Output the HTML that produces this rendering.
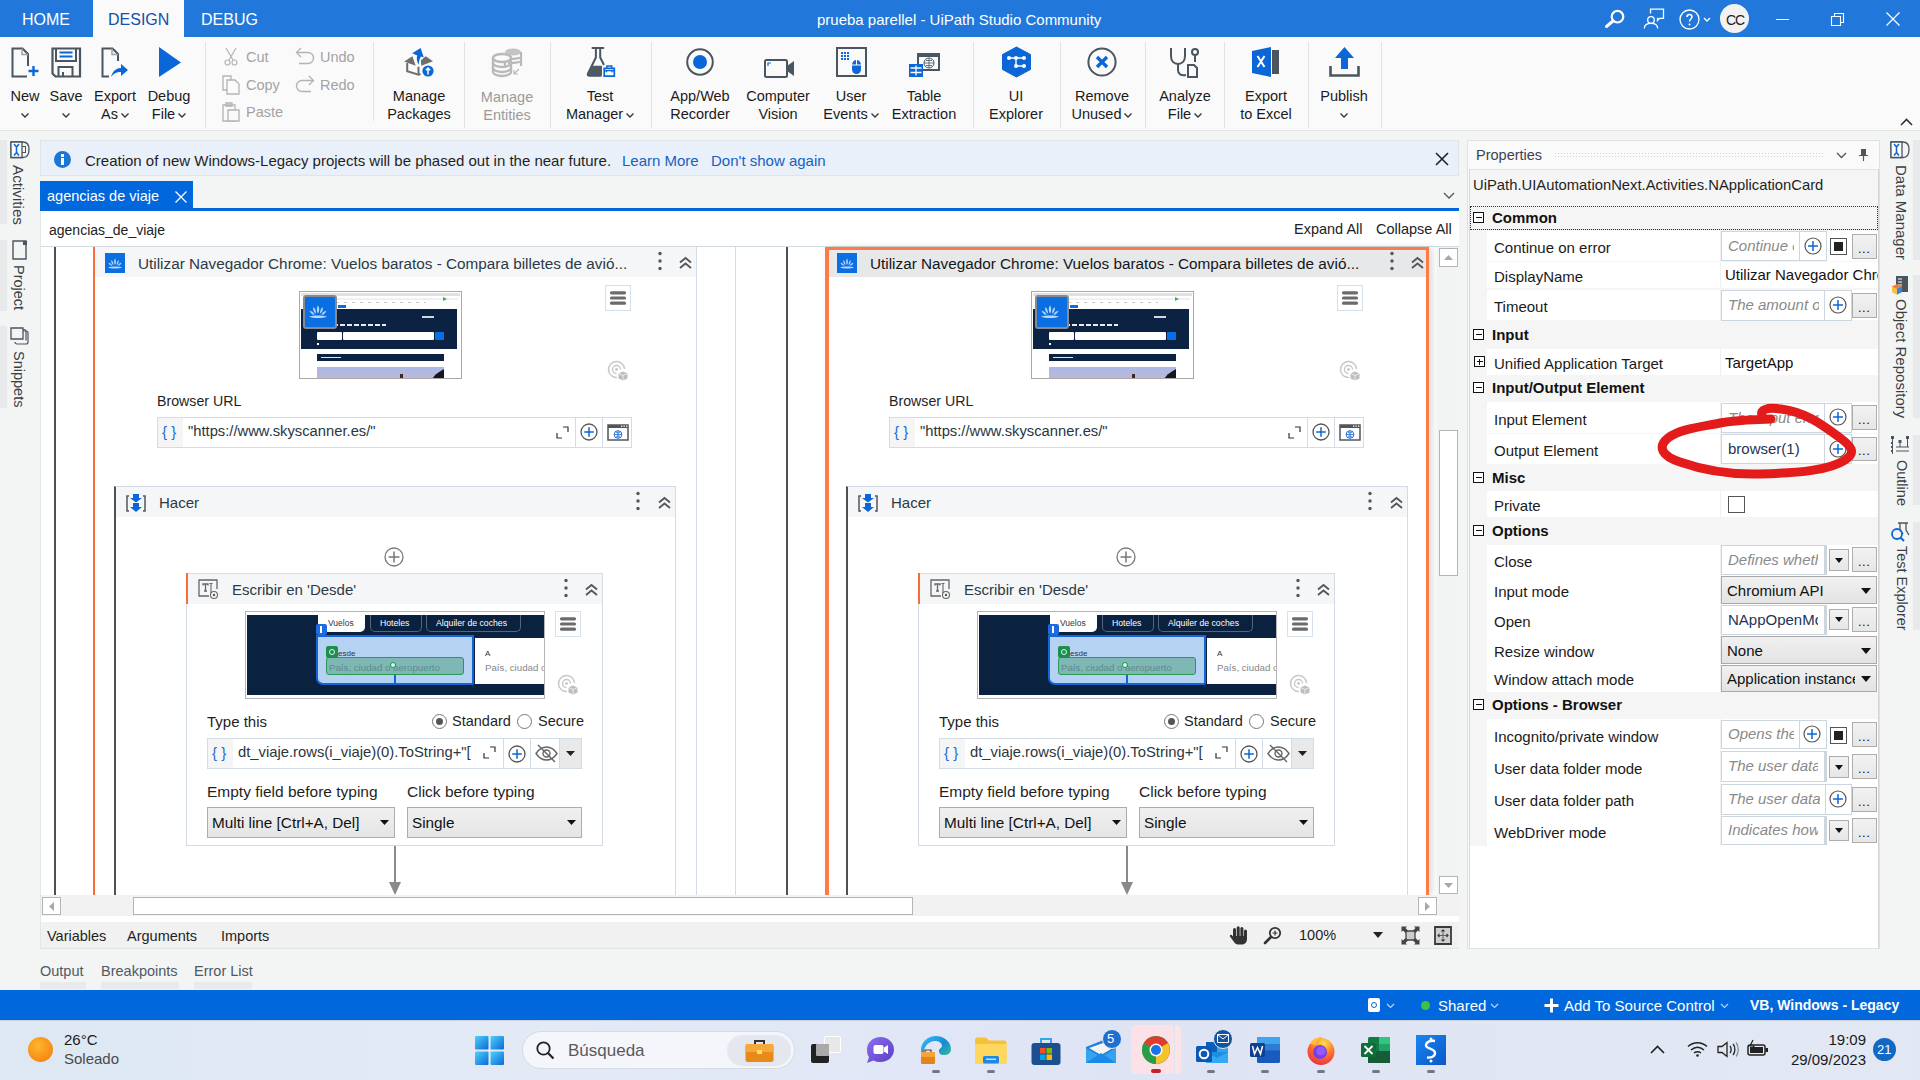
<!DOCTYPE html>
<html><head><meta charset="utf-8">
<style>
*{box-sizing:border-box;margin:0;padding:0}
html,body{width:1920px;height:1080px;overflow:hidden}
body{position:relative;background:#f3f5f5;font-family:"Liberation Sans",sans-serif;color:#1f1f1f;font-size:14px}
.a{position:absolute}
.t{position:absolute;white-space:nowrap;line-height:1}
svg{position:absolute;overflow:visible}
</style></head><body>

<!-- TITLE BAR -->
<div class="a" style="left:0;top:0;width:1920px;height:37px;background:#2178da"></div>
<div class="a" style="left:93px;top:0;width:91px;height:37px;background:#fafafa"></div>
<div class="t" style="left:22px;top:12px;font-size:16px;color:#fff">HOME</div>
<div class="t" style="left:108px;top:12px;font-size:16px;color:#1450a8">DESIGN</div>
<div class="t" style="left:201px;top:12px;font-size:16px;color:#fff">DEBUG</div>
<div class="t" style="left:817px;top:12px;font-size:15px;color:#fff">prueba parellel - UiPath Studio Community</div>

<!-- RIBBON -->
<div class="a" style="left:0;top:37px;width:1920px;height:94px;background:#fafafa;border-bottom:1px solid #e4e4e4"></div>
<style>
.rl{position:absolute;width:100px;text-align:center;font-size:14.5px;line-height:18px;color:#1b1b1b;white-space:nowrap}
.rl.g{color:#9a9a9a}
.sep{position:absolute;top:42px;width:1px;height:86px;background:#e2e2e2}
.ch{position:relative!important;display:inline-block;width:8px;height:5px;margin-left:3px;vertical-align:1px}
</style>
<!-- New -->
<svg style="left:11px;top:47px" width="28" height="31" viewBox="0 0 28 31"><path d="M16 29.5H1.5V1.5H11.5L17 7V19" fill="none" stroke="#4a555e" stroke-width="2"/><path d="M11 1.5V7.5H17" fill="none" stroke="#9aa3a9" stroke-width="1.5"/><path d="M22.5 19v10M17.5 24h10" stroke="#0b67d8" stroke-width="2.4"/></svg>
<div class="rl" style="top:87px;left:-25px;">New<br><svg class="ch" style="position:relative;margin:0" viewBox="0 0 8 5"><path d="M0.5 0.5L4 4L7.5 0.5" fill="none" stroke="#333" stroke-width="1.3"/></svg></div>
<!-- Save -->
<svg style="left:51px;top:47px" width="30" height="31" viewBox="0 0 30 31"><path d="M1.5 1.5H29V29.5H4.5L1.5 26.5Z" fill="none" stroke="#4a555e" stroke-width="2.2"/><path d="M5 2V14H25V2" fill="none" stroke="#4a555e" stroke-width="2"/><path d="M8.5 5.5H21.5M8.5 9.5H21.5" stroke="#0b67d8" stroke-width="2"/><path d="M7.5 29V20H21.5V29M12 29V25" fill="none" stroke="#4a555e" stroke-width="2"/></svg>
<div class="rl" style="top:87px;left:16px;">Save<br><svg class="ch" style="position:relative;margin:0" viewBox="0 0 8 5"><path d="M0.5 0.5L4 4L7.5 0.5" fill="none" stroke="#333" stroke-width="1.3"/></svg></div>
<!-- Export As -->
<svg style="left:101px;top:47px" width="28" height="31" viewBox="0 0 28 31"><path d="M8 29.5H1.5V1.5H11.5L17 7V14" fill="none" stroke="#4a555e" stroke-width="2"/><path d="M11 1.5V7.5H17" fill="none" stroke="#9aa3a9" stroke-width="1.5"/><path d="M10 30C12 23 16 21 20 21V17L27 23L20 29V25C16 25 13 26 10 30Z" fill="#0b67d8"/></svg>
<div class="rl" style="top:87px;left:65px;">Export<br>As<svg class="ch" viewBox="0 0 8 5"><path d="M0.5 0.5L4 4L7.5 0.5" fill="none" stroke="#333" stroke-width="1.3"/></svg></div>
<!-- Debug File -->
<svg style="left:159px;top:47px" width="23" height="31" viewBox="0 0 23 31"><path d="M0 0L22 15.5L0 30Z" fill="#0b67d8"/></svg>
<div class="rl" style="top:87px;left:119px;">Debug<br>File<svg class="ch" viewBox="0 0 8 5"><path d="M0.5 0.5L4 4L7.5 0.5" fill="none" stroke="#333" stroke-width="1.3"/></svg></div>
<div class="sep" style="left:205px"></div>
<!-- Cut Copy Paste -->
<svg style="left:223px;top:48px" width="16" height="18" viewBox="0 0 16 18"><path d="M3 0L10 12M13 0L6 12" stroke="#b4b4b4" stroke-width="1.2" fill="none"/><circle cx="4.5" cy="14.5" r="2.5" fill="none" stroke="#b4b4b4" stroke-width="1.2"/><circle cx="11.5" cy="14.5" r="2.5" fill="none" stroke="#b4b4b4" stroke-width="1.2"/></svg>
<div class="t" style="left:246px;top:50px;font-size:14.5px;color:#a3a3a3">Cut</div>
<svg style="left:222px;top:75px" width="18" height="20" viewBox="0 0 18 20"><path d="M1 1H9V15H1Z" fill="none" stroke="#b4b4b4" stroke-width="1.3"/><path d="M5 5H13L17 9V19H5Z" fill="#fafafa" stroke="#b4b4b4" stroke-width="1.3"/></svg>
<div class="t" style="left:246px;top:78px;font-size:14.5px;color:#a3a3a3">Copy</div>
<svg style="left:222px;top:102px" width="18" height="20" viewBox="0 0 18 20"><path d="M1 3H13V19H1Z" fill="none" stroke="#b4b4b4" stroke-width="1.3"/><path d="M4 1H10V4H4Z" fill="none" stroke="#b4b4b4" stroke-width="1.3"/><path d="M6 8H17V19H6Z" fill="#fafafa" stroke="#b4b4b4" stroke-width="1.3"/></svg>
<div class="t" style="left:246px;top:105px;font-size:14.5px;color:#a3a3a3">Paste</div>
<svg style="left:295px;top:47px" width="20" height="18" viewBox="0 0 20 18"><path d="M6 1L1.5 5.5L6 10" fill="none" stroke="#b4b4b4" stroke-width="1.4"/><path d="M2 5.5H13A5.5 5.5 0 0 1 13 16.5H4" fill="none" stroke="#b4b4b4" stroke-width="1.4"/></svg>
<div class="t" style="left:320px;top:50px;font-size:14.5px;color:#a3a3a3">Undo</div>
<svg style="left:295px;top:75px" width="20" height="18" viewBox="0 0 20 18"><path d="M14 1L18.5 5.5L14 10" fill="none" stroke="#b4b4b4" stroke-width="1.4"/><path d="M18 5.5H7A5.5 5.5 0 0 0 7 16.5H16" fill="none" stroke="#b4b4b4" stroke-width="1.4"/></svg>
<div class="t" style="left:320px;top:78px;font-size:14.5px;color:#a3a3a3">Redo</div>
<div class="sep" style="left:373px;height:79px"></div>
<!-- Manage Packages -->
<svg style="left:404px;top:48px" width="30" height="30" viewBox="0 0 30 30"><path d="M0.2 13.4L8.4 8.3L11.7 17.7Z" fill="#6e6e6e"/><path d="M16.9 12.5L21.7 8.3L29 13.3L17.3 17.7Z" fill="#6e6e6e"/><path d="M3.2 15V23.3L14.6 26.8L16.5 26" fill="none" stroke="#6e6e6e" stroke-width="2"/><path d="M14.5 18.8V26.5" stroke="#6e6e6e" stroke-width="2"/><path d="M16.6 0L19.8 9.6L17 8.6C15.6 10.5 15.2 13 14.6 16.8C13 14 12.3 11 13.2 7.6L8.2 5.3Z" fill="#0b67d8"/><circle cx="24" cy="23" r="5.6" fill="#0b67d8"/><path d="M24 26.5V20M21.8 22.2L24 20L26.2 22.2" fill="none" stroke="#fff" stroke-width="1.5"/></svg>
<div class="rl" style="top:87px;left:369px;">Manage<br>Packages</div>
<div class="sep" style="left:464px"></div>
<!-- Manage Entities -->
<svg style="left:491px;top:47px" width="32" height="31" viewBox="0 0 32 31"><g fill="none" stroke="#b9b9b9" stroke-width="2.2"><ellipse cx="22" cy="5" rx="8" ry="3.5" fill="#c4c4c4" stroke="none"/><path d="M14 8V21M30 5V19"/><path d="M17 12C25 12 30 11 30 10M17 16C25 16 30 15 30 14"/></g><g fill="none" stroke="#b9b9b9" stroke-width="2.4"><ellipse cx="11" cy="11" rx="9" ry="4" fill="#fafafa"/><path d="M2 11V25C2 27 6 29 11 29S20 27 20 25V11"/><path d="M2 16C2 18 6 20 11 20S20 18 20 16M2 21C2 23 6 25 11 25S20 23 20 21"/></g><path d="M28 22L23 27M23 23V27H27" fill="none" stroke="#b9b9b9" stroke-width="1.2"/></svg>
<div class="rl g" style="left:457px;top:88px">Manage<br>Entities</div>
<div class="sep" style="left:550px"></div>
<!-- Test Manager -->
<svg style="left:586px;top:47px" width="30" height="31" viewBox="0 0 30 31"><path d="M6.6 1H17.3" stroke="#4a555e" stroke-width="2.2" stroke-linecap="round"/><path d="M9.9 1V10.5L2 26.5C1.3 28 2 28.8 3.5 28.8H15.5" fill="none" stroke="#4a555e" stroke-width="2"/><path d="M14.2 1V10.5L18 18" fill="none" stroke="#4a555e" stroke-width="2"/><path d="M5.3 18.7H16V28.8H3C1.5 28.8 1 28 1.6 26.8Z" fill="#4f5b64"/><path d="M18.2 21.4H28.3V29.2H18.2Z" fill="#fafafa" stroke="#0b67d8" stroke-width="1.7"/><path d="M20.8 21V19H25.8V21M18.2 23.6H28.3M20.5 23.5V25.2M26 23.5V25.2" fill="none" stroke="#0b67d8" stroke-width="1.4"/></svg>
<div class="rl" style="top:87px;left:550px;">Test<br>Manager<svg class="ch" viewBox="0 0 8 5"><path d="M0.5 0.5L4 4L7.5 0.5" fill="none" stroke="#333" stroke-width="1.3"/></svg></div>
<div class="sep" style="left:651px"></div>
<!-- App/Web Recorder -->
<svg style="left:686px;top:48px" width="28" height="28" viewBox="0 0 28 28"><circle cx="14" cy="14" r="12.8" fill="none" stroke="#4a555e" stroke-width="2"/><circle cx="14" cy="14" r="7" fill="#0b67d8"/></svg>
<div class="rl" style="top:87px;left:650px;">App/Web<br>Recorder</div>
<!-- Computer Vision -->
<svg style="left:764px;top:59px" width="31" height="19" viewBox="0 0 31 19"><path d="M1 2.5C1 1.5 1.5 1 2.5 1H21.5C22.5 1 23 1.5 23 2.5V16.5C23 17.5 22.5 18 21.5 18H2.5C1.5 18 1 17.5 1 16.5Z" fill="none" stroke="#4a555e" stroke-width="2"/><path d="M23 7L30 2V17L23 12Z" fill="#4a555e"/><path d="M4 7V4H7" fill="none" stroke="#0b67d8" stroke-width="1.2"/></svg>
<div class="rl" style="top:87px;left:728px;">Computer<br>Vision</div>
<!-- User Events -->
<svg style="left:836px;top:47px" width="31" height="30" viewBox="0 0 31 30"><path d="M1 1H30V29H1Z" fill="none" stroke="#4a555e" stroke-width="2"/><g fill="#0b67d8"><rect x="5" y="5" width="2" height="2"/><rect x="8" y="5" width="2" height="2"/><rect x="11" y="5" width="2" height="2"/><rect x="5" y="8" width="2" height="2"/><rect x="8" y="8" width="2" height="2"/><rect x="11" y="8" width="2" height="2"/><rect x="5" y="11" width="2" height="2"/><rect x="8" y="11" width="2" height="2"/><rect x="11" y="11" width="2" height="2"/></g><path d="M16 18C16 15 18 13 20.5 13C23 13 25 15 25 18V22C25 25 23 27 20.5 27C18 27 16 25 16 22Z" fill="#0b67d8"/><path d="M20.5 13V18M16 18H25" stroke="#fafafa" stroke-width="1"/></svg>
<div class="rl" style="top:87px;left:801px;">User<br>Events<svg class="ch" viewBox="0 0 8 5"><path d="M0.5 0.5L4 4L7.5 0.5" fill="none" stroke="#333" stroke-width="1.3"/></svg></div>
<!-- Table Extraction -->
<svg style="left:909px;top:53px" width="31" height="24" viewBox="0 0 31 24"><path d="M9 1H30V17H9Z" fill="none" stroke="#4a555e" stroke-width="2"/><path d="M9 3H30" stroke="#4a555e" stroke-width="2"/><circle cx="20" cy="10" r="5" fill="none" stroke="#4a555e" stroke-width="1"/><path d="M15 10H25M20 5V15M17 7.5H23M17 12.5H23" stroke="#4a555e" stroke-width="0.8"/><path d="M0 11H14V24H0Z" fill="#0b67d8"/><path d="M1.5 15H12.5M1.5 19.5H12.5M7 12.5V22.5" stroke="#fafafa" stroke-width="1.3"/></svg>
<div class="rl" style="top:87px;left:874px;">Table<br>Extraction</div>
<div class="sep" style="left:973px"></div>
<!-- UI Explorer -->
<svg style="left:1002px;top:47px" width="29" height="30" viewBox="0 0 29 30"><path d="M14.5 0L28.5 7.5V22.5L14.5 30L0.5 22.5V7.5Z" fill="#0b67d8" stroke="#0b67d8" stroke-linejoin="round" stroke-width="1"/><g fill="#fff"><circle cx="7" cy="11" r="2"/><circle cx="22" cy="11" r="2"/><circle cx="14" cy="11" r="2"/><circle cx="22" cy="19" r="2"/><circle cx="14" cy="19" r="2"/></g><path d="M7 11H22M14 11V19H22" fill="none" stroke="#fff" stroke-width="1.4"/></svg>
<div class="rl" style="top:87px;left:966px;">UI<br>Explorer</div>
<div class="sep" style="left:1060px"></div>
<!-- Remove Unused -->
<svg style="left:1087px;top:47px" width="30" height="30" viewBox="0 0 30 30"><circle cx="15" cy="15" r="13.6" fill="none" stroke="#4a555e" stroke-width="2"/><path d="M10 10L20 20M20 10L10 20" stroke="#0b67d8" stroke-width="3.4"/></svg>
<div class="rl" style="top:87px;left:1052px;">Remove<br>Unused<svg class="ch" viewBox="0 0 8 5"><path d="M0.5 0.5L4 4L7.5 0.5" fill="none" stroke="#333" stroke-width="1.3"/></svg></div>
<div class="sep" style="left:1145px"></div>
<!-- Analyze File -->
<svg style="left:1169px;top:47px" width="32" height="31" viewBox="0 0 32 31"><path d="M2 1V9C2 14 5 17 9 17S16 14 16 9V1" fill="none" stroke="#4a555e" stroke-width="2"/><path d="M9 17V23C9 27 12 29 17 28" fill="none" stroke="#4a555e" stroke-width="2"/><circle cx="26" cy="5" r="3" fill="none" stroke="#4a555e" stroke-width="2"/><path d="M26 8V15" stroke="#4a555e" stroke-width="2"/><path d="M19 30V18H25L28 21V30Z" fill="none" stroke="#4a555e" stroke-width="2"/></svg>
<div class="rl" style="top:87px;left:1135px;">Analyze<br>File<svg class="ch" viewBox="0 0 8 5"><path d="M0.5 0.5L4 4L7.5 0.5" fill="none" stroke="#333" stroke-width="1.3"/></svg></div>
<div class="sep" style="left:1224px"></div>
<!-- Export to Excel -->
<svg style="left:1252px;top:47px" width="28" height="30" viewBox="0 0 28 30"><path d="M0 4L19 0V30L0 26Z" fill="#0b67d8"/><path d="M20 3H27V27H20Z" fill="#4a555e"/><path d="M5.5 9L12.5 20M12.5 9L5.5 20" stroke="#fff" stroke-width="2"/></svg>
<div class="rl" style="top:87px;left:1216px;">Export<br>to Excel</div>
<div class="sep" style="left:1308px"></div>
<!-- Publish -->
<svg style="left:1329px;top:47px" width="31" height="30" viewBox="0 0 31 30"><path d="M15.5 0L25 11H19V22H12V11H6Z" fill="#0b67d8"/><path d="M1.5 19V28.5H29.5V19" fill="none" stroke="#4a555e" stroke-width="2.6"/></svg>
<div class="rl" style="top:87px;left:1294px;">Publish<br><svg class="ch" style="position:relative;margin:0" viewBox="0 0 8 5"><path d="M0.5 0.5L4 4L7.5 0.5" fill="none" stroke="#333" stroke-width="1.3"/></svg></div>
<div class="sep" style="left:1381px"></div>
<!-- collapse ribbon -->
<svg style="left:1900px;top:118px" width="13" height="8" viewBox="0 0 13 8"><path d="M1 7L6.5 1.5L12 7" fill="none" stroke="#333" stroke-width="1.6"/></svg>

<!-- APP -->
<!-- TITLE ICONS -->
<svg style="left:1603px;top:9px" width="22" height="21" viewBox="0 0 22 21"><circle cx="14.5" cy="7.7" r="5.8" fill="none" stroke="#fff" stroke-width="2.2"/><path d="M10 12L3.5 17.5" stroke="#fff" stroke-width="3" stroke-linecap="round"/></svg>
<svg style="left:1643px;top:8px" width="22" height="21" viewBox="0 0 22 21"><path d="M7.5 5.5V1.2H20.5V10.3H16.5L14.5 12.5V10.3H14" fill="none" stroke="#fff" stroke-width="1.3"/><circle cx="8" cy="12" r="3.3" fill="#2178da" stroke="#fff" stroke-width="1.3"/><path d="M1.3 20.5C1.3 17 4 15.3 8 15.3S14.7 17 14.7 20.5" fill="none" stroke="#fff" stroke-width="1.3"/></svg>
<svg style="left:1679px;top:9px" width="36" height="21" viewBox="0 0 36 21"><circle cx="10.5" cy="10.5" r="9.5" fill="none" stroke="#fff" stroke-width="1.3"/><path d="M8 8C8 6.3 9 5.5 10.5 5.5S13 6.5 13 8C13 10 10.5 10 10.5 12.5" fill="none" stroke="#fff" stroke-width="1.5"/><circle cx="10.5" cy="15.5" r="1" fill="#fff"/><path d="M25 9L28 12L31 9" fill="none" stroke="#fff" stroke-width="1.4"/></svg>
<div class="a" style="left:1720px;top:4px;width:29px;height:29px;border-radius:50%;background:#f2f2f2"></div>
<div class="t" style="left:1726px;top:12px;font-size:14px;color:#222;letter-spacing:-1px;transform:scaleY(1.1)">CC</div>
<div class="a" style="left:1776px;top:19px;width:13px;height:1px;background:#fff"></div>
<svg style="left:1830px;top:12px" width="15" height="14" viewBox="0 0 15 14"><path d="M1.5 4.5H10.5V13.5H1.5Z M4.5 4.5V1.5H13.5V10.5H10.5" fill="none" stroke="#fff" stroke-width="1.1"/></svg>
<svg style="left:1886px;top:12px" width="14" height="14" viewBox="0 0 14 14"><path d="M0.5 0.5L13.5 13.5M13.5 0.5L0.5 13.5" stroke="#fff" stroke-width="1.2"/></svg>

<!-- LEFT SIDEBAR -->
<div class="a" style="left:0;top:140px;width:7px;height:84px;background:#e7e9eb"></div>
<div class="a" style="left:0;top:240px;width:7px;height:71px;background:#e7e9eb"></div>
<div class="a" style="left:0;top:326px;width:7px;height:82px;background:#e7e9eb"></div>
<svg style="left:10px;top:141px" width="20" height="18" viewBox="0 0 20 18"><path d="M1 1H13C17 1 19 4 19 8.5S17 16.5 13 16.5H1Z" fill="none" stroke="#4a555e" stroke-width="1.3"/><path d="M1 1H12V16.5H1Z" fill="#fff" stroke="#4a555e" stroke-width="1.3"/><path d="M12 5.5H16M12 11.5H16M15.5 5.5V11.5" fill="none" stroke="#4a555e" stroke-width="1"/><path d="M4 3L6.5 6V11.5L4 14.5M9 3L6.5 6M9 14.5L6.5 11.5" fill="none" stroke="#0b67d8" stroke-width="1.6"/></svg>
<div class="t" style="left:26px;top:165px;font-size:15.2px;color:#3a3f44;transform-origin:0 0;transform:rotate(90deg)">Activities</div>
<svg style="left:12px;top:240px" width="16" height="21" viewBox="0 0 16 21"><path d="M1 1H14V19H1Z" fill="none" stroke="#4a555e" stroke-width="1.4"/><path d="M11 1H15V5H11Z" fill="#4a555e"/></svg>
<div class="t" style="left:26px;top:265px;font-size:14.5px;color:#3a3f44;transform-origin:0 0;transform:rotate(90deg)">Project</div>
<svg style="left:10px;top:327px" width="20" height="18" viewBox="0 0 20 18"><path d="M5 4H16C17 4 18 5 18 6V15C18 16 17 17 16 17H7C6 17 5 16 5 15" fill="none" stroke="#4a555e" stroke-width="1.2"/><path d="M3 2.5H14C15 2.5 16 3.5 16 4.5V13.5" fill="none" stroke="#4a555e" stroke-width="1.2"/><path d="M1 1H13V12H1Z" fill="#f3f5f5" stroke="#4a555e" stroke-width="1.3"/></svg>
<div class="t" style="left:26px;top:351px;font-size:14.5px;color:#3a3f44;transform-origin:0 0;transform:rotate(90deg)">Snippets</div>

<!-- INFO BAR -->
<div class="a" style="left:40px;top:140px;width:1419px;height:36px;background:#e9f0f9;border:1px solid #dfe4ea"></div>
<div class="a" style="left:54px;top:151px;width:17px;height:17px;border-radius:50%;background:#1c74d6"></div>
<div class="a" style="left:61px;top:154px;width:2.5px;height:2.5px;background:#fff"></div>
<div class="a" style="left:61px;top:158px;width:2.5px;height:7px;background:#fff"></div>
<div class="t" style="left:85px;top:153px;font-size:15px;color:#1f1f1f">Creation of new Windows-Legacy projects will be phased out in the near future.</div>
<div class="t" style="left:622px;top:153px;font-size:15px;color:#1462c4">Learn More</div>
<div class="t" style="left:711px;top:153px;font-size:15px;color:#1462c4">Don't show again</div>
<svg style="left:1435px;top:152px" width="14" height="14" viewBox="0 0 14 14"><path d="M1 1L13 13M13 1L1 13" stroke="#222" stroke-width="1.6"/></svg>

<!-- DOC TAB ROW -->
<div class="a" style="left:40px;top:181px;width:153px;height:30px;background:#0067dc"></div>
<div class="a" style="left:40px;top:208px;width:1419px;height:3px;background:#0067dc"></div>
<div class="t" style="left:47px;top:189px;font-size:14.5px;color:#fff">agencias de viaje</div>
<svg style="left:175px;top:191px" width="12" height="12" viewBox="0 0 12 12"><path d="M0.5 0.5L11.5 11.5M11.5 0.5L0.5 11.5" stroke="#fff" stroke-width="1.3"/></svg>
<svg style="left:1443px;top:192px" width="12" height="7" viewBox="0 0 12 7"><path d="M1 1L6 6L11 1" fill="none" stroke="#555" stroke-width="1.3"/></svg>

<!-- DESIGNER -->
<div class="a" style="left:40px;top:211px;width:1419px;height:738px;background:#fff;border-left:1px solid #e2e6ea"></div>
<div class="t" style="left:49px;top:223px;font-size:14px;color:#222">agencias_de_viaje</div>
<div class="t" style="left:1294px;top:222px;font-size:14.5px;color:#222">Expand All</div>
<div class="t" style="left:1376px;top:222px;font-size:14.5px;color:#222">Collapse All</div>
<div class="a" style="left:41px;top:246px;width:1418px;height:1px;background:#d3dbe2"></div>

<!-- CANVAS -->
<div class="a" style="left:54px;top:247px;width:2px;height:648px;background:#505050"></div>
<div class="a" style="left:735px;top:247px;width:1px;height:648px;background:#d3dce4"></div>
<div class="a" style="left:786px;top:247px;width:2px;height:648px;background:#505050"></div>
<div class="a" style="left:93px;top:247px;width:2px;height:648px;background:#f96c38"></div>
<div class="a" style="left:696px;top:247px;width:1px;height:648px;background:#d3dce4"></div>
<div class="a" style="left:95px;top:247px;width:601px;height:30px;background:#f5f6f7"></div>
<div class="a" style="left:105px;top:253px;width:20px;height:20px;background:#0b6fe3"></div><svg style="left:105px;top:253px" width="20" height="20" viewBox="0 0 20 20"><g fill="#d8e8fb" opacity="0.85"><path d="M10 5.5C11.2 7.5 11.2 10 10 12C8.8 10 8.8 7.5 10 5.5Z"/><path d="M6.3 7C7.8 8 8.6 10 8.3 12.2C6.8 11.2 6 9.2 6.3 7Z"/><path d="M13.7 7C12.2 8 11.4 10 11.7 12.2C13.2 11.2 14 9.2 13.7 7Z"/><path d="M3.5 9.8C5.3 10 6.8 11.2 7.3 13C5.5 12.8 4.1 11.6 3.5 9.8Z"/><path d="M16.5 9.8C14.7 10 13.2 11.2 12.7 13C14.5 12.8 15.9 11.6 16.5 9.8Z"/><path d="M3 14.5C6 13.2 14 13.2 17 14.5C14 15.8 6 15.8 3 14.5Z" opacity="1"/></g></svg>
<div class="t" style="left:138px;top:256px;font-size:15.3px;color:#2c3a45">Utilizar Navegador Chrome: Vuelos baratos - Compara billetes de avió...</div>
<svg style="left:658px;top:251px" width="4" height="20" viewBox="0 0 4 20"><circle cx="2" cy="2.5" r="1.7" fill="#555"/><circle cx="2" cy="10" r="1.7" fill="#555"/><circle cx="2" cy="17.5" r="1.7" fill="#555"/></svg>
<svg style="left:679px;top:257px" width="13" height="12" viewBox="0 0 13 12"><path d="M1 5.5L6.5 1L12 5.5M1 11L6.5 6.5L12 11" fill="none" stroke="#555" stroke-width="1.8"/></svg>
<div class="a" style="left:299px;top:291px;width:163px;height:88px;border:1px solid #a9a9a9;background:#fff;overflow:hidden">
<div class="a" style="left:1px;top:1px;width:159px;height:3px;background:#dfe1e4"></div>
<div class="a" style="left:3px;top:6px;width:155px;height:2px;background:#eef0f2"></div>
<div class="a" style="left:143px;top:5px;width:4px;height:4px;background:#3cb04a;clip-path:polygon(0 0,100% 50%,0 100%)"></div>
<div class="a" style="left:36px;top:10px;width:90px;height:1px;background:repeating-linear-gradient(90deg,#c8c8c8 0 3px,transparent 3px 8px)"></div>
<div class="a" style="left:38px;top:13px;width:8px;height:3px;background:#0770e3"></div>
<div class="a" style="left:1px;top:17px;width:156px;height:40px;background:#0b2242"></div>
<div class="a" style="left:26px;top:32px;width:60px;height:2px;background:repeating-linear-gradient(90deg,#e8ecf2 0 5px,transparent 5px 7px)"></div>
<div class="a" style="left:122px;top:24px;width:12px;height:2px;background:#cfd6e0"></div>
<div class="a" style="left:17px;top:40px;width:25px;height:8px;background:#fff;border-radius:1px"></div>
<div class="a" style="left:43px;top:40px;width:91px;height:8px;background:#fff;border-radius:1px"></div>
<div class="a" style="left:135px;top:40px;width:9px;height:8px;background:#0770e3;border-radius:1px"></div>
<div class="a" style="left:17px;top:51px;width:2px;height:2px;background:#fff"></div>
<div class="a" style="left:17px;top:62px;width:127px;height:7px;background:#0b2242"></div>
<div class="a" style="left:21px;top:65px;width:20px;height:1px;background:#dfe5ee"></div>
<div class="a" style="left:17px;top:75px;width:127px;height:12px;background:linear-gradient(#aab8e6,#bdb9d8)"></div>
<div class="a" style="left:132px;top:77px;width:12px;height:10px;background:#15161f;clip-path:polygon(100% 0,100% 100%,0 100%,30% 55%,60% 30%)"></div>
<div class="a" style="left:100px;top:82px;width:3px;height:4px;background:#3a2a20"></div>
<div class="a" style="left:3px;top:3px;width:34px;height:34px;border:2px solid #8a8a8a;border-radius:3px;background:#0a6fe2"></div>
</div><div class="a" style="left:305px;top:298px;width:26px;height:26px;background:transparent"></div><svg style="left:305px;top:298px" width="26" height="26" viewBox="0 0 20 20"><g fill="#d8e8fb" opacity="0.85"><path d="M10 5.5C11.2 7.5 11.2 10 10 12C8.8 10 8.8 7.5 10 5.5Z"/><path d="M6.3 7C7.8 8 8.6 10 8.3 12.2C6.8 11.2 6 9.2 6.3 7Z"/><path d="M13.7 7C12.2 8 11.4 10 11.7 12.2C13.2 11.2 14 9.2 13.7 7Z"/><path d="M3.5 9.8C5.3 10 6.8 11.2 7.3 13C5.5 12.8 4.1 11.6 3.5 9.8Z"/><path d="M16.5 9.8C14.7 10 13.2 11.2 12.7 13C14.5 12.8 15.9 11.6 16.5 9.8Z"/><path d="M3 14.5C6 13.2 14 13.2 17 14.5C14 15.8 6 15.8 3 14.5Z" opacity="1"/></g></svg>
<div class="a" style="left:605px;top:285px;width:26px;height:26px;border:1px solid #d6e0ea;background:#fff"></div><svg style="left:610px;top:291px" width="16" height="14" viewBox="0 0 16 14"><path d="M1.5 1.8H14.5M1.5 7H14.5M1.5 12.2H14.5" stroke="#6b6b6b" stroke-width="3.2" stroke-linecap="round"/></svg>
<svg style="left:608px;top:361px" width="21" height="20" viewBox="0 0 21 20"><path d="M16.5 8A8 8 0 1 0 9 16.5" fill="none" stroke="#c8c8c8" stroke-width="1.5"/><path d="M12.5 8.5A4 4 0 1 0 8.5 12.5" fill="none" stroke="#c8c8c8" stroke-width="1.4"/><circle cx="8.5" cy="8.5" r="1.4" fill="#c8c8c8"/><path d="M15 10.5L19.5 12.5V17.5L15 19.5L10.5 17.5V12.5Z" fill="#bdbdbd"/><path d="M10.5 12.5L15 14.5L19.5 12.5M15 14.5V19.5" fill="none" stroke="#fff" stroke-width="0.7"/></svg>
<div class="t" style="left:157px;top:394px;font-size:14.2px;color:#1f1f1f">Browser URL</div>
<div class="a" style="left:157px;top:417px;width:475px;height:31px;border:1px solid #d3dce4;background:#fff"></div>
<div class="a" style="left:158px;top:418px;width:25px;height:29px;background:#f5f5f5"></div>
<div class="t" style="left:162px;top:424px;font-size:15px;color:#1b6bd6;letter-spacing:0px">{&nbsp;}</div>
<div class="t" style="left:188px;top:424px;font-size:14.75px;color:#2b3640">"https://www.skyscanner.es/"</div>
<svg style="left:556px;top:426px" width="13" height="13" viewBox="0 0 13 13"><path d="M1 7V12H6M7 1H12V6" fill="none" stroke="#333" stroke-width="1.2"/></svg>
<div class="a" style="left:575px;top:417px;width:1px;height:31px;background:#d3dce4"></div>
<svg style="left:580px;top:423px" width="18" height="18" viewBox="0 0 18 18"><circle cx="9" cy="9" r="8" fill="none" stroke="#555" stroke-width="1.3"/><path d="M9 4.2V13.8M4.2 9H13.8" stroke="#0b67d8" stroke-width="1.5"/></svg>
<div class="a" style="left:602px;top:417px;width:1px;height:31px;background:#d3dce4"></div>
<svg style="left:607px;top:424px" width="22" height="17" viewBox="0 0 22 17"><path d="M1 1H21V16H1Z" fill="none" stroke="#555" stroke-width="1.5"/><path d="M1 1H21V4H1Z" fill="#555"/><g fill="#fff"><rect x="14" y="1.5" width="1.3" height="1.3"/><rect x="16.5" y="1.5" width="1.3" height="1.3"/><rect x="19" y="1.5" width="1.3" height="1.3"/></g><circle cx="11" cy="10.5" r="3.8" fill="none" stroke="#1b6bd6" stroke-width="1"/><path d="M7.2 10.5H14.8M11 6.7V14.3M9 8.5C10 9 12 9 13 8.5M9 12.5C10 12 12 12 13 12.5" fill="none" stroke="#1b6bd6" stroke-width="0.8"/></svg>
<div class="a" style="left:114px;top:486px;width:562px;height:409px;border:1px solid #d3dce4;border-left:2px solid #505050;border-bottom:0;background:#fff"></div>
<div class="a" style="left:116px;top:487px;width:559px;height:30px;background:#f5f6f7"></div>
<svg style="left:125px;top:491px" width="22" height="22" viewBox="0 0 22 22"><path d="M4 5H2V20H4M18 5H20V20H18" fill="none" stroke="#555" stroke-width="1.5"/><path d="M8 3H14V7H17L11 11.5L5 7H8Z" fill="#0b67d8"/><path d="M8 12H14V16H17L11 21L5 16H8Z" fill="#0b67d8"/></svg>
<div class="t" style="left:159px;top:495px;font-size:15px;color:#2c3a45">Hacer</div>
<svg style="left:636px;top:491px" width="4" height="20" viewBox="0 0 4 20"><circle cx="2" cy="2.5" r="1.7" fill="#555"/><circle cx="2" cy="10" r="1.7" fill="#555"/><circle cx="2" cy="17.5" r="1.7" fill="#555"/></svg>
<svg style="left:658px;top:497px" width="13" height="12" viewBox="0 0 13 12"><path d="M1 5.5L6.5 1L12 5.5M1 11L6.5 6.5L12 11" fill="none" stroke="#555" stroke-width="1.8"/></svg>
<svg style="left:384px;top:547px" width="20" height="20" viewBox="0 0 20 20"><circle cx="10" cy="10" r="9" fill="none" stroke="#777" stroke-width="1.3"/><path d="M10 4.6000000000000005V15.399999999999999M4.6000000000000005 10H15.399999999999999" stroke="#777" stroke-width="1.5"/></svg>
<div class="a" style="left:186px;top:573px;width:417px;height:273px;border:1px solid #d3dce4;background:#fff"></div>
<div class="a" style="left:186px;top:573px;width:2px;height:31px;background:#f96c38"></div>
<div class="a" style="left:188px;top:574px;width:414px;height:30px;background:#f5f6f7"></div>
<svg style="left:198px;top:579px" width="22" height="21" viewBox="0 0 22 21"><path d="M11 17H1V1H19V10" fill="none" stroke="#666" stroke-width="1.3"/><path d="M5 6.5V5H10V6.5M7.5 5V12M6 12H9" fill="none" stroke="#666" stroke-width="1.3"/><path d="M11.5 4.5H14.5M13 4.5V14" fill="none" stroke="#666" stroke-width="1.1"/><circle cx="16" cy="16" r="3.5" fill="#f5f6f7" stroke="#666" stroke-width="1.1"/><circle cx="16" cy="16" r="1.2" fill="#555"/></svg>
<div class="t" style="left:232px;top:582px;font-size:15px;color:#2c3a45">Escribir en 'Desde'</div>
<svg style="left:564px;top:578px" width="4" height="20" viewBox="0 0 4 20"><circle cx="2" cy="2.5" r="1.7" fill="#555"/><circle cx="2" cy="10" r="1.7" fill="#555"/><circle cx="2" cy="17.5" r="1.7" fill="#555"/></svg>
<svg style="left:585px;top:584px" width="13" height="12" viewBox="0 0 13 12"><path d="M1 5.5L6.5 1L12 5.5M1 11L6.5 6.5L12 11" fill="none" stroke="#555" stroke-width="1.8"/></svg>
<div class="a" style="left:245px;top:611px;width:300px;height:88px;border:1px solid #b4b4b4;background:#fff;overflow:hidden">
<div class="a" style="left:1px;top:3px;width:297px;height:80px;background:#0b2140"></div>
<div class="a" style="left:72px;top:3px;width:47px;height:17px;background:#fff;border-radius:0 0 5px 5px"></div>
<div class="t" style="left:82px;top:7px;font-size:8.5px;color:#333">Vuelos</div>
<div class="a" style="left:124px;top:3px;width:52px;height:17px;border:1px solid #56657a;border-top:0;border-radius:0 0 5px 5px"></div>
<div class="t" style="left:134px;top:7px;font-size:8.7px;color:#fff">Hoteles</div>
<div class="a" style="left:180px;top:3px;width:95px;height:17px;border:1px solid #56657a;border-top:0;border-radius:0 0 5px 5px"></div>
<div class="t" style="left:190px;top:7px;font-size:8.7px;color:#fff">Alquiler de coches</div>
<div class="a" style="left:70px;top:23px;width:158px;height:50px;background:#b5d2f3;border:2px solid #1565d8;border-radius:0 0 2px 7px"></div>
<div class="a" style="left:229px;top:26px;width:70px;height:46px;background:#fff"></div>
<div class="t" style="left:239px;top:38px;font-size:8px;color:#333">A</div>
<div class="t" style="left:239px;top:51px;font-size:9.7px;color:#888">País, ciudad o</div>
<div class="a" style="left:80px;top:45px;width:138px;height:18px;background:#7fb7b5;border:1.5px solid #2a9955;border-radius:3px"></div>
<div class="t" style="left:83px;top:51px;font-size:9.7px;color:#5c8c8c">País, ciudad o aeropuerto</div>
<div class="t" style="left:92px;top:38px;font-size:8px;color:#333">esde</div>
<div class="a" style="left:80px;top:34px;width:12px;height:12px;background:#1f8e4a;border-radius:2px"></div>
<div class="a" style="left:83px;top:37px;width:6px;height:6px;border:1px solid #cfe;border-radius:50%"></div>
<div class="a" style="left:144px;top:50px;width:6px;height:6px;border:1.5px solid #1f8e4a;border-radius:50%;background:#cfe"></div>
<div class="a" style="left:148px;top:63px;width:2px;height:10px;background:#1565d8"></div>
<div class="a" style="left:70px;top:12px;width:11px;height:11px;background:#1a6de0;border-radius:2px"></div>
<div class="a" style="left:74px;top:14px;width:2px;height:7px;background:#fff"></div>
</div>
<div class="a" style="left:555px;top:611px;width:26px;height:26px;border:1px solid #d6e0ea;background:#fff"></div><svg style="left:560px;top:617px" width="16" height="14" viewBox="0 0 16 14"><path d="M1.5 1.8H14.5M1.5 7H14.5M1.5 12.2H14.5" stroke="#6b6b6b" stroke-width="3.2" stroke-linecap="round"/></svg>
<svg style="left:558px;top:675px" width="21" height="20" viewBox="0 0 21 20"><path d="M16.5 8A8 8 0 1 0 9 16.5" fill="none" stroke="#c8c8c8" stroke-width="1.5"/><path d="M12.5 8.5A4 4 0 1 0 8.5 12.5" fill="none" stroke="#c8c8c8" stroke-width="1.4"/><circle cx="8.5" cy="8.5" r="1.4" fill="#c8c8c8"/><path d="M15 10.5L19.5 12.5V17.5L15 19.5L10.5 17.5V12.5Z" fill="#bdbdbd"/><path d="M10.5 12.5L15 14.5L19.5 12.5M15 14.5V19.5" fill="none" stroke="#fff" stroke-width="0.7"/></svg>
<div class="t" style="left:207px;top:714px;font-size:15px;color:#1f1f1f">Type this</div>
<div class="a" style="left:432px;top:714px;width:15px;height:15px;border:1px solid #777;border-radius:50%;background:#fff"></div>
<div class="a" style="left:436px;top:718px;width:7px;height:7px;border-radius:50%;background:#555"></div>
<div class="t" style="left:452px;top:714px;font-size:14.5px;color:#1f1f1f">Standard</div>
<div class="a" style="left:517px;top:714px;width:15px;height:15px;border:1px solid #777;border-radius:50%;background:#fff"></div>
<div class="t" style="left:538px;top:714px;font-size:14.5px;color:#1f1f1f">Secure</div>
<div class="a" style="left:207px;top:738px;width:375px;height:31px;border:1px solid #d3dce4;background:#fff"></div>
<div class="a" style="left:208px;top:739px;width:25px;height:29px;background:#f5f5f5"></div>
<div class="t" style="left:212px;top:745px;font-size:15px;color:#1b6bd6;letter-spacing:0px">{&nbsp;}</div>
<div class="t" style="left:238px;top:745px;font-size:14.8px;color:#2b3640">dt_viaje.rows(i_viaje)(0).ToString+"[</div>
<svg style="left:483px;top:746px" width="13" height="13" viewBox="0 0 13 13"><path d="M1 7V12H6M7 1H12V6" fill="none" stroke="#333" stroke-width="1.2"/></svg>
<div class="a" style="left:503px;top:738px;width:1px;height:31px;background:#d3dce4"></div>
<svg style="left:508px;top:745px" width="18" height="18" viewBox="0 0 18 18"><circle cx="9" cy="9" r="8" fill="none" stroke="#555" stroke-width="1.3"/><path d="M9 4.2V13.8M4.2 9H13.8" stroke="#0b67d8" stroke-width="1.5"/></svg>
<div class="a" style="left:530px;top:738px;width:1px;height:31px;background:#d3dce4"></div>
<svg style="left:535px;top:744px" width="23" height="19" viewBox="0 0 23 19"><path d="M1 9.5C4 5 8 3 11.5 3S19 5 22 9.5C19 14 15 16 11.5 16S4 14 1 9.5Z" fill="none" stroke="#666" stroke-width="1.4"/><circle cx="11.5" cy="9.5" r="3.5" fill="none" stroke="#666" stroke-width="1.4"/><path d="M3 1L20 18" stroke="#666" stroke-width="1.5"/></svg>
<div class="a" style="left:559px;top:738px;width:1px;height:31px;background:#d3dce4"></div>
<div class="a" style="left:560px;top:739px;width:21px;height:29px;background:#e9e9e9"></div>
<svg style="left:566px;top:751px" width="9" height="5" viewBox="0 0 9 5"><path d="M0 0H9L4.5 5Z" fill="#222"/></svg>
<div class="t" style="left:207px;top:784px;font-size:15.5px;color:#1f1f1f">Empty field before typing</div>
<div class="t" style="left:407px;top:784px;font-size:15.5px;color:#1f1f1f">Click before typing</div>
<div class="a" style="left:207px;top:807px;width:188px;height:31px;border:1px solid #acacac;background:linear-gradient(#f0f0f0,#e5e5e5)"></div>
<div class="t" style="left:212px;top:815px;font-size:15.3px;color:#111">Multi line [Ctrl+A, Del]</div>
<svg style="left:380px;top:820px" width="9" height="5" viewBox="0 0 9 5"><path d="M0 0H9L4.5 5Z" fill="#111"/></svg>
<div class="a" style="left:407px;top:807px;width:175px;height:31px;border:1px solid #acacac;background:linear-gradient(#f0f0f0,#e5e5e5)"></div>
<div class="t" style="left:412px;top:815px;font-size:15.3px;color:#111">Single</div>
<svg style="left:567px;top:820px" width="9" height="5" viewBox="0 0 9 5"><path d="M0 0H9L4.5 5Z" fill="#111"/></svg>
<div class="a" style="left:394px;top:846px;width:1.5px;height:40px;background:#8a8a8a"></div>
<svg style="left:389px;top:882px" width="12" height="13" viewBox="0 0 12 13"><path d="M0 0H12L6 13Z" fill="#8a8a8a"/></svg>
<div class="a" style="left:825px;top:247px;width:604px;height:648px;border:3px solid #ff7a45;border-left-width:4px;border-bottom:0;box-shadow:4px 0 7px rgba(0,0,0,0.13)"></div>
<div class="a" style="left:829px;top:250px;width:597px;height:27px;background:#e6e8ea"></div>
<div class="a" style="left:837px;top:253px;width:20px;height:20px;background:#0b6fe3"></div><svg style="left:837px;top:253px" width="20" height="20" viewBox="0 0 20 20"><g fill="#d8e8fb" opacity="0.85"><path d="M10 5.5C11.2 7.5 11.2 10 10 12C8.8 10 8.8 7.5 10 5.5Z"/><path d="M6.3 7C7.8 8 8.6 10 8.3 12.2C6.8 11.2 6 9.2 6.3 7Z"/><path d="M13.7 7C12.2 8 11.4 10 11.7 12.2C13.2 11.2 14 9.2 13.7 7Z"/><path d="M3.5 9.8C5.3 10 6.8 11.2 7.3 13C5.5 12.8 4.1 11.6 3.5 9.8Z"/><path d="M16.5 9.8C14.7 10 13.2 11.2 12.7 13C14.5 12.8 15.9 11.6 16.5 9.8Z"/><path d="M3 14.5C6 13.2 14 13.2 17 14.5C14 15.8 6 15.8 3 14.5Z" opacity="1"/></g></svg>
<div class="t" style="left:870px;top:256px;font-size:15.3px;color:#161616">Utilizar Navegador Chrome: Vuelos baratos - Compara billetes de avió...</div>
<svg style="left:1390px;top:251px" width="4" height="20" viewBox="0 0 4 20"><circle cx="2" cy="2.5" r="1.7" fill="#555"/><circle cx="2" cy="10" r="1.7" fill="#555"/><circle cx="2" cy="17.5" r="1.7" fill="#555"/></svg>
<svg style="left:1411px;top:257px" width="13" height="12" viewBox="0 0 13 12"><path d="M1 5.5L6.5 1L12 5.5M1 11L6.5 6.5L12 11" fill="none" stroke="#555" stroke-width="1.8"/></svg>
<div class="a" style="left:1031px;top:291px;width:163px;height:88px;border:1px solid #a9a9a9;background:#fff;overflow:hidden">
<div class="a" style="left:1px;top:1px;width:159px;height:3px;background:#dfe1e4"></div>
<div class="a" style="left:3px;top:6px;width:155px;height:2px;background:#eef0f2"></div>
<div class="a" style="left:143px;top:5px;width:4px;height:4px;background:#3cb04a;clip-path:polygon(0 0,100% 50%,0 100%)"></div>
<div class="a" style="left:36px;top:10px;width:90px;height:1px;background:repeating-linear-gradient(90deg,#c8c8c8 0 3px,transparent 3px 8px)"></div>
<div class="a" style="left:38px;top:13px;width:8px;height:3px;background:#0770e3"></div>
<div class="a" style="left:1px;top:17px;width:156px;height:40px;background:#0b2242"></div>
<div class="a" style="left:26px;top:32px;width:60px;height:2px;background:repeating-linear-gradient(90deg,#e8ecf2 0 5px,transparent 5px 7px)"></div>
<div class="a" style="left:122px;top:24px;width:12px;height:2px;background:#cfd6e0"></div>
<div class="a" style="left:17px;top:40px;width:25px;height:8px;background:#fff;border-radius:1px"></div>
<div class="a" style="left:43px;top:40px;width:91px;height:8px;background:#fff;border-radius:1px"></div>
<div class="a" style="left:135px;top:40px;width:9px;height:8px;background:#0770e3;border-radius:1px"></div>
<div class="a" style="left:17px;top:51px;width:2px;height:2px;background:#fff"></div>
<div class="a" style="left:17px;top:62px;width:127px;height:7px;background:#0b2242"></div>
<div class="a" style="left:21px;top:65px;width:20px;height:1px;background:#dfe5ee"></div>
<div class="a" style="left:17px;top:75px;width:127px;height:12px;background:linear-gradient(#aab8e6,#bdb9d8)"></div>
<div class="a" style="left:132px;top:77px;width:12px;height:10px;background:#15161f;clip-path:polygon(100% 0,100% 100%,0 100%,30% 55%,60% 30%)"></div>
<div class="a" style="left:100px;top:82px;width:3px;height:4px;background:#3a2a20"></div>
<div class="a" style="left:3px;top:3px;width:34px;height:34px;border:2px solid #8a8a8a;border-radius:3px;background:#0a6fe2"></div>
</div><div class="a" style="left:1037px;top:298px;width:26px;height:26px;background:transparent"></div><svg style="left:1037px;top:298px" width="26" height="26" viewBox="0 0 20 20"><g fill="#d8e8fb" opacity="0.85"><path d="M10 5.5C11.2 7.5 11.2 10 10 12C8.8 10 8.8 7.5 10 5.5Z"/><path d="M6.3 7C7.8 8 8.6 10 8.3 12.2C6.8 11.2 6 9.2 6.3 7Z"/><path d="M13.7 7C12.2 8 11.4 10 11.7 12.2C13.2 11.2 14 9.2 13.7 7Z"/><path d="M3.5 9.8C5.3 10 6.8 11.2 7.3 13C5.5 12.8 4.1 11.6 3.5 9.8Z"/><path d="M16.5 9.8C14.7 10 13.2 11.2 12.7 13C14.5 12.8 15.9 11.6 16.5 9.8Z"/><path d="M3 14.5C6 13.2 14 13.2 17 14.5C14 15.8 6 15.8 3 14.5Z" opacity="1"/></g></svg>
<div class="a" style="left:1337px;top:285px;width:26px;height:26px;border:1px solid #d6e0ea;background:#fff"></div><svg style="left:1342px;top:291px" width="16" height="14" viewBox="0 0 16 14"><path d="M1.5 1.8H14.5M1.5 7H14.5M1.5 12.2H14.5" stroke="#6b6b6b" stroke-width="3.2" stroke-linecap="round"/></svg>
<svg style="left:1340px;top:361px" width="21" height="20" viewBox="0 0 21 20"><path d="M16.5 8A8 8 0 1 0 9 16.5" fill="none" stroke="#c8c8c8" stroke-width="1.5"/><path d="M12.5 8.5A4 4 0 1 0 8.5 12.5" fill="none" stroke="#c8c8c8" stroke-width="1.4"/><circle cx="8.5" cy="8.5" r="1.4" fill="#c8c8c8"/><path d="M15 10.5L19.5 12.5V17.5L15 19.5L10.5 17.5V12.5Z" fill="#bdbdbd"/><path d="M10.5 12.5L15 14.5L19.5 12.5M15 14.5V19.5" fill="none" stroke="#fff" stroke-width="0.7"/></svg>
<div class="t" style="left:889px;top:394px;font-size:14.2px;color:#1f1f1f">Browser URL</div>
<div class="a" style="left:889px;top:417px;width:475px;height:31px;border:1px solid #d3dce4;background:#fff"></div>
<div class="a" style="left:890px;top:418px;width:25px;height:29px;background:#f5f5f5"></div>
<div class="t" style="left:894px;top:424px;font-size:15px;color:#1b6bd6;letter-spacing:0px">{&nbsp;}</div>
<div class="t" style="left:920px;top:424px;font-size:14.75px;color:#2b3640">"https://www.skyscanner.es/"</div>
<svg style="left:1288px;top:426px" width="13" height="13" viewBox="0 0 13 13"><path d="M1 7V12H6M7 1H12V6" fill="none" stroke="#333" stroke-width="1.2"/></svg>
<div class="a" style="left:1307px;top:417px;width:1px;height:31px;background:#d3dce4"></div>
<svg style="left:1312px;top:423px" width="18" height="18" viewBox="0 0 18 18"><circle cx="9" cy="9" r="8" fill="none" stroke="#555" stroke-width="1.3"/><path d="M9 4.2V13.8M4.2 9H13.8" stroke="#0b67d8" stroke-width="1.5"/></svg>
<div class="a" style="left:1334px;top:417px;width:1px;height:31px;background:#d3dce4"></div>
<svg style="left:1339px;top:424px" width="22" height="17" viewBox="0 0 22 17"><path d="M1 1H21V16H1Z" fill="none" stroke="#555" stroke-width="1.5"/><path d="M1 1H21V4H1Z" fill="#555"/><g fill="#fff"><rect x="14" y="1.5" width="1.3" height="1.3"/><rect x="16.5" y="1.5" width="1.3" height="1.3"/><rect x="19" y="1.5" width="1.3" height="1.3"/></g><circle cx="11" cy="10.5" r="3.8" fill="none" stroke="#1b6bd6" stroke-width="1"/><path d="M7.2 10.5H14.8M11 6.7V14.3M9 8.5C10 9 12 9 13 8.5M9 12.5C10 12 12 12 13 12.5" fill="none" stroke="#1b6bd6" stroke-width="0.8"/></svg>
<div class="a" style="left:846px;top:486px;width:562px;height:409px;border:1px solid #d3dce4;border-left:2px solid #505050;border-bottom:0;background:#fff"></div>
<div class="a" style="left:848px;top:487px;width:559px;height:30px;background:#f5f6f7"></div>
<svg style="left:857px;top:491px" width="22" height="22" viewBox="0 0 22 22"><path d="M4 5H2V20H4M18 5H20V20H18" fill="none" stroke="#555" stroke-width="1.5"/><path d="M8 3H14V7H17L11 11.5L5 7H8Z" fill="#0b67d8"/><path d="M8 12H14V16H17L11 21L5 16H8Z" fill="#0b67d8"/></svg>
<div class="t" style="left:891px;top:495px;font-size:15px;color:#2c3a45">Hacer</div>
<svg style="left:1368px;top:491px" width="4" height="20" viewBox="0 0 4 20"><circle cx="2" cy="2.5" r="1.7" fill="#555"/><circle cx="2" cy="10" r="1.7" fill="#555"/><circle cx="2" cy="17.5" r="1.7" fill="#555"/></svg>
<svg style="left:1390px;top:497px" width="13" height="12" viewBox="0 0 13 12"><path d="M1 5.5L6.5 1L12 5.5M1 11L6.5 6.5L12 11" fill="none" stroke="#555" stroke-width="1.8"/></svg>
<svg style="left:1116px;top:547px" width="20" height="20" viewBox="0 0 20 20"><circle cx="10" cy="10" r="9" fill="none" stroke="#777" stroke-width="1.3"/><path d="M10 4.6000000000000005V15.399999999999999M4.6000000000000005 10H15.399999999999999" stroke="#777" stroke-width="1.5"/></svg>
<div class="a" style="left:918px;top:573px;width:417px;height:273px;border:1px solid #d3dce4;background:#fff"></div>
<div class="a" style="left:918px;top:573px;width:2px;height:31px;background:#f96c38"></div>
<div class="a" style="left:920px;top:574px;width:414px;height:30px;background:#f5f6f7"></div>
<svg style="left:930px;top:579px" width="22" height="21" viewBox="0 0 22 21"><path d="M11 17H1V1H19V10" fill="none" stroke="#666" stroke-width="1.3"/><path d="M5 6.5V5H10V6.5M7.5 5V12M6 12H9" fill="none" stroke="#666" stroke-width="1.3"/><path d="M11.5 4.5H14.5M13 4.5V14" fill="none" stroke="#666" stroke-width="1.1"/><circle cx="16" cy="16" r="3.5" fill="#f5f6f7" stroke="#666" stroke-width="1.1"/><circle cx="16" cy="16" r="1.2" fill="#555"/></svg>
<div class="t" style="left:964px;top:582px;font-size:15px;color:#2c3a45">Escribir en 'Desde'</div>
<svg style="left:1296px;top:578px" width="4" height="20" viewBox="0 0 4 20"><circle cx="2" cy="2.5" r="1.7" fill="#555"/><circle cx="2" cy="10" r="1.7" fill="#555"/><circle cx="2" cy="17.5" r="1.7" fill="#555"/></svg>
<svg style="left:1317px;top:584px" width="13" height="12" viewBox="0 0 13 12"><path d="M1 5.5L6.5 1L12 5.5M1 11L6.5 6.5L12 11" fill="none" stroke="#555" stroke-width="1.8"/></svg>
<div class="a" style="left:977px;top:611px;width:300px;height:88px;border:1px solid #b4b4b4;background:#fff;overflow:hidden">
<div class="a" style="left:1px;top:3px;width:297px;height:80px;background:#0b2140"></div>
<div class="a" style="left:72px;top:3px;width:47px;height:17px;background:#fff;border-radius:0 0 5px 5px"></div>
<div class="t" style="left:82px;top:7px;font-size:8.5px;color:#333">Vuelos</div>
<div class="a" style="left:124px;top:3px;width:52px;height:17px;border:1px solid #56657a;border-top:0;border-radius:0 0 5px 5px"></div>
<div class="t" style="left:134px;top:7px;font-size:8.7px;color:#fff">Hoteles</div>
<div class="a" style="left:180px;top:3px;width:95px;height:17px;border:1px solid #56657a;border-top:0;border-radius:0 0 5px 5px"></div>
<div class="t" style="left:190px;top:7px;font-size:8.7px;color:#fff">Alquiler de coches</div>
<div class="a" style="left:70px;top:23px;width:158px;height:50px;background:#b5d2f3;border:2px solid #1565d8;border-radius:0 0 2px 7px"></div>
<div class="a" style="left:229px;top:26px;width:70px;height:46px;background:#fff"></div>
<div class="t" style="left:239px;top:38px;font-size:8px;color:#333">A</div>
<div class="t" style="left:239px;top:51px;font-size:9.7px;color:#888">País, ciudad o</div>
<div class="a" style="left:80px;top:45px;width:138px;height:18px;background:#7fb7b5;border:1.5px solid #2a9955;border-radius:3px"></div>
<div class="t" style="left:83px;top:51px;font-size:9.7px;color:#5c8c8c">País, ciudad o aeropuerto</div>
<div class="t" style="left:92px;top:38px;font-size:8px;color:#333">esde</div>
<div class="a" style="left:80px;top:34px;width:12px;height:12px;background:#1f8e4a;border-radius:2px"></div>
<div class="a" style="left:83px;top:37px;width:6px;height:6px;border:1px solid #cfe;border-radius:50%"></div>
<div class="a" style="left:144px;top:50px;width:6px;height:6px;border:1.5px solid #1f8e4a;border-radius:50%;background:#cfe"></div>
<div class="a" style="left:148px;top:63px;width:2px;height:10px;background:#1565d8"></div>
<div class="a" style="left:70px;top:12px;width:11px;height:11px;background:#1a6de0;border-radius:2px"></div>
<div class="a" style="left:74px;top:14px;width:2px;height:7px;background:#fff"></div>
</div>
<div class="a" style="left:1287px;top:611px;width:26px;height:26px;border:1px solid #d6e0ea;background:#fff"></div><svg style="left:1292px;top:617px" width="16" height="14" viewBox="0 0 16 14"><path d="M1.5 1.8H14.5M1.5 7H14.5M1.5 12.2H14.5" stroke="#6b6b6b" stroke-width="3.2" stroke-linecap="round"/></svg>
<svg style="left:1290px;top:675px" width="21" height="20" viewBox="0 0 21 20"><path d="M16.5 8A8 8 0 1 0 9 16.5" fill="none" stroke="#c8c8c8" stroke-width="1.5"/><path d="M12.5 8.5A4 4 0 1 0 8.5 12.5" fill="none" stroke="#c8c8c8" stroke-width="1.4"/><circle cx="8.5" cy="8.5" r="1.4" fill="#c8c8c8"/><path d="M15 10.5L19.5 12.5V17.5L15 19.5L10.5 17.5V12.5Z" fill="#bdbdbd"/><path d="M10.5 12.5L15 14.5L19.5 12.5M15 14.5V19.5" fill="none" stroke="#fff" stroke-width="0.7"/></svg>
<div class="t" style="left:939px;top:714px;font-size:15px;color:#1f1f1f">Type this</div>
<div class="a" style="left:1164px;top:714px;width:15px;height:15px;border:1px solid #777;border-radius:50%;background:#fff"></div>
<div class="a" style="left:1168px;top:718px;width:7px;height:7px;border-radius:50%;background:#555"></div>
<div class="t" style="left:1184px;top:714px;font-size:14.5px;color:#1f1f1f">Standard</div>
<div class="a" style="left:1249px;top:714px;width:15px;height:15px;border:1px solid #777;border-radius:50%;background:#fff"></div>
<div class="t" style="left:1270px;top:714px;font-size:14.5px;color:#1f1f1f">Secure</div>
<div class="a" style="left:939px;top:738px;width:375px;height:31px;border:1px solid #d3dce4;background:#fff"></div>
<div class="a" style="left:940px;top:739px;width:25px;height:29px;background:#f5f5f5"></div>
<div class="t" style="left:944px;top:745px;font-size:15px;color:#1b6bd6;letter-spacing:0px">{&nbsp;}</div>
<div class="t" style="left:970px;top:745px;font-size:14.8px;color:#2b3640">dt_viaje.rows(i_viaje)(0).ToString+"[</div>
<svg style="left:1215px;top:746px" width="13" height="13" viewBox="0 0 13 13"><path d="M1 7V12H6M7 1H12V6" fill="none" stroke="#333" stroke-width="1.2"/></svg>
<div class="a" style="left:1235px;top:738px;width:1px;height:31px;background:#d3dce4"></div>
<svg style="left:1240px;top:745px" width="18" height="18" viewBox="0 0 18 18"><circle cx="9" cy="9" r="8" fill="none" stroke="#555" stroke-width="1.3"/><path d="M9 4.2V13.8M4.2 9H13.8" stroke="#0b67d8" stroke-width="1.5"/></svg>
<div class="a" style="left:1262px;top:738px;width:1px;height:31px;background:#d3dce4"></div>
<svg style="left:1267px;top:744px" width="23" height="19" viewBox="0 0 23 19"><path d="M1 9.5C4 5 8 3 11.5 3S19 5 22 9.5C19 14 15 16 11.5 16S4 14 1 9.5Z" fill="none" stroke="#666" stroke-width="1.4"/><circle cx="11.5" cy="9.5" r="3.5" fill="none" stroke="#666" stroke-width="1.4"/><path d="M3 1L20 18" stroke="#666" stroke-width="1.5"/></svg>
<div class="a" style="left:1291px;top:738px;width:1px;height:31px;background:#d3dce4"></div>
<div class="a" style="left:1292px;top:739px;width:21px;height:29px;background:#e9e9e9"></div>
<svg style="left:1298px;top:751px" width="9" height="5" viewBox="0 0 9 5"><path d="M0 0H9L4.5 5Z" fill="#222"/></svg>
<div class="t" style="left:939px;top:784px;font-size:15.5px;color:#1f1f1f">Empty field before typing</div>
<div class="t" style="left:1139px;top:784px;font-size:15.5px;color:#1f1f1f">Click before typing</div>
<div class="a" style="left:939px;top:807px;width:188px;height:31px;border:1px solid #acacac;background:linear-gradient(#f0f0f0,#e5e5e5)"></div>
<div class="t" style="left:944px;top:815px;font-size:15.3px;color:#111">Multi line [Ctrl+A, Del]</div>
<svg style="left:1112px;top:820px" width="9" height="5" viewBox="0 0 9 5"><path d="M0 0H9L4.5 5Z" fill="#111"/></svg>
<div class="a" style="left:1139px;top:807px;width:175px;height:31px;border:1px solid #acacac;background:linear-gradient(#f0f0f0,#e5e5e5)"></div>
<div class="t" style="left:1144px;top:815px;font-size:15.3px;color:#111">Single</div>
<svg style="left:1299px;top:820px" width="9" height="5" viewBox="0 0 9 5"><path d="M0 0H9L4.5 5Z" fill="#111"/></svg>
<div class="a" style="left:1126px;top:846px;width:1.5px;height:40px;background:#8a8a8a"></div>
<svg style="left:1121px;top:882px" width="12" height="13" viewBox="0 0 12 13"><path d="M0 0H12L6 13Z" fill="#8a8a8a"/></svg>
<!-- /CANVAS -->
<!-- BOTTOM -->
<div class="a" style="left:41px;top:895px;width:1418px;height:22px;background:#f2f2f2"></div>
<div class="a" style="left:1437px;top:247px;width:22px;height:648px;background:#f2f3f3"></div>
<div class="a" style="left:1439px;top:248px;width:19px;height:19px;border:1px solid #b5b5b5;background:#fff"></div>
<svg style="left:1444px;top:255px" width="9" height="5" viewBox="0 0 9 5"><path d="M0 5H9L4.5 0Z" fill="#a8a8a8"/></svg>
<div class="a" style="left:1439px;top:430px;width:19px;height:146px;border:1px solid #b5b5b5;background:#fff"></div>
<div class="a" style="left:1439px;top:876px;width:19px;height:18px;border:1px solid #b5b5b5;background:#fff"></div>
<svg style="left:1444px;top:883px" width="9" height="5" viewBox="0 0 9 5"><path d="M0 0H9L4.5 5Z" fill="#a8a8a8"/></svg>
<div class="a" style="left:42px;top:897px;width:19px;height:18px;border:1px solid #b5b5b5;background:#fff"></div>
<svg style="left:49px;top:902px" width="5" height="9" viewBox="0 0 5 9"><path d="M5 0V9L0 4.5Z" fill="#a8a8a8"/></svg>
<div class="a" style="left:133px;top:897px;width:780px;height:18px;border:1px solid #b5b5b5;background:#fff"></div>
<div class="a" style="left:1418px;top:897px;width:19px;height:18px;border:1px solid #b5b5b5;background:#fff"></div>
<svg style="left:1425px;top:902px" width="5" height="9" viewBox="0 0 5 9"><path d="M0 0V9L5 4.5Z" fill="#a8a8a8"/></svg>
<div class="a" style="left:41px;top:916px;width:1418px;height:6px;background:#fff"></div>
<div class="a" style="left:41px;top:922px;width:1418px;height:27px;background:#f1f1f1;border-bottom:1px solid #e3e3e3"></div>
<div class="t" style="left:47px;top:929px;font-size:14.5px;color:#1f1f1f">Variables</div>
<div class="t" style="left:127px;top:929px;font-size:14.5px;color:#1f1f1f">Arguments</div>
<div class="t" style="left:221px;top:929px;font-size:14.5px;color:#1f1f1f">Imports</div>
<svg style="left:1229px;top:926px" width="20" height="19" viewBox="0 0 20 19"><g fill="#333"><rect x="4" y="2" width="3" height="10" rx="1.5"/><rect x="7.7" y="0.3" width="3" height="11" rx="1.5"/><rect x="11.4" y="1" width="3" height="11" rx="1.5"/><rect x="15" y="3.5" width="3" height="9" rx="1.5"/><path d="M4 10H18V13C18 16 16 18.5 13 18.5H9C7 18.5 6 17.5 5 16L1 10.5C0.3 9.5 1.5 8 2.7 9L4 10.5Z"/></g></svg>
<svg style="left:1263px;top:926px" width="19" height="19" viewBox="0 0 19 19"><circle cx="12" cy="7" r="5.2" fill="none" stroke="#333" stroke-width="1.8"/><path d="M8 11L2 17" stroke="#333" stroke-width="2.6" stroke-linecap="round"/><path d="M12 4.5V9.5M9.5 7H14.5" stroke="#333" stroke-width="1.2"/></svg>
<div class="t" style="left:1299px;top:928px;font-size:14.5px;color:#1f1f1f">100%</div>
<svg style="left:1373px;top:932px" width="10" height="6" viewBox="0 0 10 6"><path d="M0 0H10L5 6Z" fill="#222"/></svg>
<svg style="left:1401px;top:926px" width="19" height="19" viewBox="0 0 19 19"><path d="M5 5H14V14H5Z" fill="#ccc" stroke="#444" stroke-width="1.3"/><path d="M0.5 0.5H6L4.5 2L7 4.5L4.5 7L2 4.5L0.5 6Z M18.5 0.5H13L14.5 2L12 4.5L14.5 7L17 4.5L18.5 6Z M0.5 18.5H6L4.5 17L7 14.5L4.5 12L2 14.5L0.5 13Z M18.5 18.5H13L14.5 17L12 14.5L14.5 12L17 14.5L18.5 13Z" fill="#444"/></svg>
<svg style="left:1434px;top:926px" width="18" height="19" viewBox="0 0 18 19"><path d="M1 1H17V18H1Z" fill="#cfcfcf" stroke="#3a3a3a" stroke-width="1.8"/><path d="M9 4V15M4 9.5H14" stroke="#555" stroke-width="0.9"/><path d="M7.5 5.5L9 4L10.5 5.5M7.5 13.5L9 15L10.5 13.5M5.5 8L4 9.5L5.5 11M12.5 8L14 9.5L12.5 11" fill="none" stroke="#333" stroke-width="1.1"/></svg>
<div class="t" style="left:40px;top:964px;font-size:14.5px;color:#4f5a63">Output</div>
<div class="t" style="left:101px;top:964px;font-size:14.5px;color:#4f5a63">Breakpoints</div>
<div class="t" style="left:194px;top:964px;font-size:14.5px;color:#4f5a63">Error List</div>
<div class="a" style="left:40px;top:982px;width:46px;height:7px;background:#e8eaec"></div>
<div class="a" style="left:101px;top:982px;width:78px;height:7px;background:#e8eaec"></div>
<div class="a" style="left:194px;top:982px;width:58px;height:7px;background:#e8eaec"></div>
<!-- /BOTTOM -->
<!-- PROPS -->
<div class="a" style="left:1467px;top:140px;width:413px;height:809px;background:#fafafa;border:1px solid #e0e0e0"></div>
<div class="t" style="left:1476px;top:148px;font-size:14.5px;color:#3a4550">Properties</div>
<div class="a" style="left:1554px;top:152px;width:270px;height:6px;background-image:radial-gradient(#cfd3d6 0.6px,transparent 0.9px);background-size:3px 3px"></div>
<svg style="left:1836px;top:152px" width="11" height="7" viewBox="0 0 11 7"><path d="M1 1L5.5 5.5L10 1" fill="none" stroke="#555" stroke-width="1.3"/></svg>
<svg style="left:1858px;top:148px" width="11" height="14" viewBox="0 0 11 14"><path d="M3 1H8V7H10V8H1V7H3Z" fill="#555"/><path d="M5.5 8V13" stroke="#555" stroke-width="1.2"/></svg>
<div class="a" style="left:1469px;top:169px;width:410px;height:779px;background:#f5f5f5;border-left:1px solid #dadada;border-top:1px solid #e4e4e4"></div>
<div class="a" style="left:1878px;top:169px;width:1px;height:779px;background:#d4d4d4"></div>
<div class="t" style="left:1473px;top:178px;font-size:14.8px;color:#1f1f1f">UiPath.UIAutomationNext.Activities.NApplicationCard</div>
<div class="a" style="left:1470px;top:229px;width:408px;height:1px;border-top:1px solid #e2e2e2"></div>
<div class="a" style="left:1470px;top:206px;width:408px;height:24px;border:1px dotted #333"></div><div class="a" style="left:1473px;top:212px;width:11px;height:11px;border:1px solid #111;background:#fff"></div><div class="a" style="left:1475.5px;top:217px;width:6px;height:1.3px;background:#111"></div><div class="t" style="left:1492px;top:210px;font-size:15px;font-weight:bold;color:#111">Common</div>
<div class="a" style="left:1487px;top:231px;width:391px;height:30px;background:#fff"></div><div class="a" style="left:1720px;top:231px;width:1px;height:30px;background:#f0f0f0"></div><div class="t" style="left:1494px;top:240.0px;font-size:15px;color:#1a1a1a">Continue on error</div>
<div class="a" style="left:1721px;top:231px;width:106px;height:30px;border:1px solid #ccd6df;background:#fff;"></div><div class="a" style="left:1722px;top:232px;width:72px;height:28px;overflow:hidden"><div class="t" style="left:6px;top:6px;font-size:15px;color:#8a8a8a;font-style:italic;">Continue e</div></div><div class="a" style="left:1799px;top:231px;width:1px;height:30px;background:#ccd6df"></div>
<svg style="left:1804px;top:237px" width="18" height="18" viewBox="0 0 18 18"><circle cx="9" cy="9" r="8" fill="none" stroke="#555" stroke-width="1.2"/><path d="M9 4.04V13.96M4.04 9H13.96" stroke="#0b67d8" stroke-width="1.5"/></svg>
<div class="a" style="left:1830px;top:238px;width:17px;height:17px;border:1px solid #555;background:#fff"></div><div class="a" style="left:1834px;top:242px;width:9px;height:9px;background:#222"></div>
<div class="a" style="left:1852px;top:234px;width:25px;height:25px;border:1px solid #adadad;background:linear-gradient(#f2f2f2,#e6e6e6)"></div><div class="t" style="left:1858px;top:242px;font-size:13px;color:#111;letter-spacing:0.5px">...</div>
<div class="a" style="left:1487px;top:262px;width:391px;height:26px;background:#fff"></div><div class="a" style="left:1720px;top:262px;width:1px;height:26px;background:#f0f0f0"></div><div class="t" style="left:1494px;top:269.0px;font-size:15px;color:#1a1a1a">DisplayName</div>
<div class="a" style="left:1721px;top:262px;width:157px;height:26px;overflow:hidden"><div class="t" style="left:4px;top:5px;font-size:15px;color:#111">Utilizar Navegador Chrome</div></div>
<div class="a" style="left:1487px;top:290px;width:391px;height:30px;background:#fff"></div><div class="a" style="left:1720px;top:290px;width:1px;height:30px;background:#f0f0f0"></div><div class="t" style="left:1494px;top:299.0px;font-size:15px;color:#1a1a1a">Timeout</div>
<div class="a" style="left:1721px;top:290px;width:131px;height:31px;border:1px solid #ccd6df;background:#fff;"></div><div class="a" style="left:1722px;top:291px;width:97px;height:29px;overflow:hidden"><div class="t" style="left:6px;top:6px;font-size:15px;color:#8a8a8a;font-style:italic;">The amount of time</div></div><div class="a" style="left:1824px;top:290px;width:1px;height:31px;background:#ccd6df"></div>
<svg style="left:1829px;top:296px" width="18" height="18" viewBox="0 0 18 18"><circle cx="9" cy="9" r="8" fill="none" stroke="#555" stroke-width="1.2"/><path d="M9 4.04V13.96M4.04 9H13.96" stroke="#0b67d8" stroke-width="1.5"/></svg>
<div class="a" style="left:1852px;top:293px;width:25px;height:25px;border:1px solid #adadad;background:linear-gradient(#f2f2f2,#e6e6e6)"></div><div class="t" style="left:1858px;top:301px;font-size:13px;color:#111;letter-spacing:0.5px">...</div>
<div class="a" style="left:1473px;top:329px;width:11px;height:11px;border:1px solid #111;background:#fff"></div><div class="a" style="left:1475.5px;top:334px;width:6px;height:1.3px;background:#111"></div><div class="t" style="left:1492px;top:327px;font-size:15px;font-weight:bold;color:#111">Input</div>
<div class="a" style="left:1487px;top:349px;width:391px;height:26px;background:#fff"></div><div class="a" style="left:1720px;top:349px;width:1px;height:26px;background:#f0f0f0"></div><div class="a" style="left:1474px;top:356.0px;width:11px;height:11px;border:1px solid #111;background:#fff"></div><div class="a" style="left:1476.5px;top:361.0px;width:6px;height:1.3px;background:#111"></div><div class="a" style="left:1478.8px;top:358.7px;width:1.3px;height:6px;background:#111"></div><div class="t" style="left:1494px;top:356.0px;font-size:15px;color:#1a1a1a">Unified Application Target</div>
<div class="t" style="left:1725px;top:355px;font-size:15px;color:#111">TargetApp</div>
<div class="a" style="left:1473px;top:382px;width:11px;height:11px;border:1px solid #111;background:#fff"></div><div class="a" style="left:1475.5px;top:387px;width:6px;height:1.3px;background:#111"></div><div class="t" style="left:1492px;top:380px;font-size:15px;font-weight:bold;color:#111">Input/Output Element</div>
<div class="a" style="left:1487px;top:402px;width:391px;height:31px;background:#fff"></div><div class="a" style="left:1720px;top:402px;width:1px;height:31px;background:#f0f0f0"></div><div class="t" style="left:1494px;top:411.5px;font-size:15px;color:#1a1a1a">Input Element</div>
<div class="a" style="left:1721px;top:403px;width:131px;height:30px;border:1px solid #ccd6df;background:#fff;"></div><div class="a" style="left:1722px;top:404px;width:97px;height:28px;overflow:hidden"><div class="t" style="left:6px;top:6px;font-size:15px;color:#8a8a8a;font-style:italic;">The input element</div></div><div class="a" style="left:1824px;top:403px;width:1px;height:30px;background:#ccd6df"></div>
<svg style="left:1829px;top:408px" width="18" height="18" viewBox="0 0 18 18"><circle cx="9" cy="9" r="8" fill="none" stroke="#555" stroke-width="1.2"/><path d="M9 4.04V13.96M4.04 9H13.96" stroke="#0b67d8" stroke-width="1.5"/></svg>
<div class="a" style="left:1852px;top:405px;width:25px;height:25px;border:1px solid #adadad;background:linear-gradient(#f2f2f2,#e6e6e6)"></div><div class="t" style="left:1858px;top:413px;font-size:13px;color:#111;letter-spacing:0.5px">...</div>
<div class="a" style="left:1487px;top:434px;width:391px;height:30px;background:#fff"></div><div class="a" style="left:1720px;top:434px;width:1px;height:30px;background:#f0f0f0"></div><div class="t" style="left:1494px;top:443.0px;font-size:15px;color:#1a1a1a">Output Element</div>
<div class="a" style="left:1721px;top:434px;width:131px;height:30px;border:1px solid #ccd6df;background:#fff;"></div><div class="a" style="left:1722px;top:435px;width:97px;height:28px;overflow:hidden"><div class="t" style="left:6px;top:6px;font-size:15px;color:#1d3557;">browser(1)</div></div><div class="a" style="left:1824px;top:434px;width:1px;height:30px;background:#ccd6df"></div>
<svg style="left:1829px;top:440px" width="18" height="18" viewBox="0 0 18 18"><circle cx="9" cy="9" r="8" fill="none" stroke="#555" stroke-width="1.2"/><path d="M9 4.04V13.96M4.04 9H13.96" stroke="#0b67d8" stroke-width="1.5"/></svg>
<div class="a" style="left:1852px;top:437px;width:25px;height:24px;border:1px solid #adadad;background:linear-gradient(#f2f2f2,#e6e6e6)"></div><div class="t" style="left:1858px;top:444px;font-size:13px;color:#111;letter-spacing:0.5px">...</div>
<div class="a" style="left:1473px;top:472px;width:11px;height:11px;border:1px solid #111;background:#fff"></div><div class="a" style="left:1475.5px;top:477px;width:6px;height:1.3px;background:#111"></div><div class="t" style="left:1492px;top:470px;font-size:15px;font-weight:bold;color:#111">Misc</div>
<div class="a" style="left:1487px;top:491px;width:391px;height:26px;background:#fff"></div><div class="a" style="left:1720px;top:491px;width:1px;height:26px;background:#f0f0f0"></div><div class="t" style="left:1494px;top:498.0px;font-size:15px;color:#1a1a1a">Private</div>
<div class="a" style="left:1728px;top:496px;width:17px;height:17px;border:1px solid #555;background:#fff"></div>
<div class="a" style="left:1473px;top:525px;width:11px;height:11px;border:1px solid #111;background:#fff"></div><div class="a" style="left:1475.5px;top:530px;width:6px;height:1.3px;background:#111"></div><div class="t" style="left:1492px;top:523px;font-size:15px;font-weight:bold;color:#111">Options</div>
<div class="a" style="left:1487px;top:545px;width:391px;height:30px;background:#fff"></div><div class="a" style="left:1720px;top:545px;width:1px;height:30px;background:#f0f0f0"></div><div class="t" style="left:1494px;top:554.0px;font-size:15px;color:#1a1a1a">Close</div>
<div class="a" style="left:1721px;top:545px;width:106px;height:30px;border:1px solid #ccd6df;background:#fff;border-right:3px solid #ccd6df;"></div><div class="a" style="left:1722px;top:546px;width:96px;height:28px;overflow:hidden"><div class="t" style="left:6px;top:6px;font-size:15px;color:#8a8a8a;font-style:italic;">Defines whether</div></div>
<div class="a" style="left:1829px;top:549px;width:20px;height:22px;border:1px solid #adadad;background:linear-gradient(#f2f2f2,#e6e6e6)"></div><svg style="left:1835px;top:558px" width="8" height="5" viewBox="0 0 8 5"><path d="M0 0H8L4 5Z" fill="#111"/></svg>
<div class="a" style="left:1852px;top:547px;width:25px;height:25px;border:1px solid #adadad;background:linear-gradient(#f2f2f2,#e6e6e6)"></div><div class="t" style="left:1858px;top:555px;font-size:13px;color:#111;letter-spacing:0.5px">...</div>
<div class="a" style="left:1487px;top:575px;width:391px;height:29px;background:#fff"></div><div class="a" style="left:1720px;top:575px;width:1px;height:29px;background:#f0f0f0"></div><div class="t" style="left:1494px;top:583.5px;font-size:15px;color:#1a1a1a">Input mode</div>
<div class="a" style="left:1721px;top:576px;width:156px;height:28px;border:1px solid #a9a9a9;background:linear-gradient(#f1f1f1,#e3e3e3);overflow:hidden"><div class="t" style="left:5px;top:6px;font-size:15px;color:#111">Chromium API</div></div><div class="a" style="left:1855px;top:577px;width:20px;height:26px;background:linear-gradient(#f1f1f1,#e3e3e3)"></div><svg style="left:1861px;top:588px" width="10" height="6" viewBox="0 0 10 6"><path d="M0 0H10L5 6Z" fill="#111"/></svg>
<div class="a" style="left:1487px;top:604px;width:391px;height:31px;background:#fff"></div><div class="a" style="left:1720px;top:604px;width:1px;height:31px;background:#f0f0f0"></div><div class="t" style="left:1494px;top:613.5px;font-size:15px;color:#1a1a1a">Open</div>
<div class="a" style="left:1721px;top:605px;width:106px;height:30px;border:1px solid #ccd6df;background:#fff;border-right:3px solid #ccd6df;"></div><div class="a" style="left:1722px;top:606px;width:96px;height:28px;overflow:hidden"><div class="t" style="left:6px;top:6px;font-size:15px;color:#1d3557;">NAppOpenMode</div></div>
<div class="a" style="left:1829px;top:609px;width:20px;height:21px;border:1px solid #adadad;background:linear-gradient(#f2f2f2,#e6e6e6)"></div><svg style="left:1835px;top:617px" width="8" height="5" viewBox="0 0 8 5"><path d="M0 0H8L4 5Z" fill="#111"/></svg>
<div class="a" style="left:1852px;top:607px;width:25px;height:25px;border:1px solid #adadad;background:linear-gradient(#f2f2f2,#e6e6e6)"></div><div class="t" style="left:1858px;top:615px;font-size:13px;color:#111;letter-spacing:0.5px">...</div>
<div class="a" style="left:1487px;top:635px;width:391px;height:29px;background:#fff"></div><div class="a" style="left:1720px;top:635px;width:1px;height:29px;background:#f0f0f0"></div><div class="t" style="left:1494px;top:643.5px;font-size:15px;color:#1a1a1a">Resize window</div>
<div class="a" style="left:1721px;top:636px;width:156px;height:28px;border:1px solid #a9a9a9;background:linear-gradient(#f1f1f1,#e3e3e3);overflow:hidden"><div class="t" style="left:5px;top:6px;font-size:15px;color:#111">None</div></div><div class="a" style="left:1855px;top:637px;width:20px;height:26px;background:linear-gradient(#f1f1f1,#e3e3e3)"></div><svg style="left:1861px;top:648px" width="10" height="6" viewBox="0 0 10 6"><path d="M0 0H10L5 6Z" fill="#111"/></svg>
<div class="a" style="left:1487px;top:664px;width:391px;height:28px;background:#fff"></div><div class="a" style="left:1720px;top:664px;width:1px;height:28px;background:#f0f0f0"></div><div class="t" style="left:1494px;top:672.0px;font-size:15px;color:#1a1a1a">Window attach mode</div>
<div class="a" style="left:1721px;top:665px;width:156px;height:27px;border:1px solid #a9a9a9;background:linear-gradient(#f1f1f1,#e3e3e3);overflow:hidden"><div class="t" style="left:5px;top:5px;font-size:15px;color:#111">Application instance</div></div><div class="a" style="left:1855px;top:666px;width:20px;height:25px;background:linear-gradient(#f1f1f1,#e3e3e3)"></div><svg style="left:1861px;top:676px" width="10" height="6" viewBox="0 0 10 6"><path d="M0 0H10L5 6Z" fill="#111"/></svg>
<div class="a" style="left:1473px;top:699px;width:11px;height:11px;border:1px solid #111;background:#fff"></div><div class="a" style="left:1475.5px;top:704px;width:6px;height:1.3px;background:#111"></div><div class="t" style="left:1492px;top:697px;font-size:15px;font-weight:bold;color:#111">Options - Browser</div>
<div class="a" style="left:1487px;top:719px;width:391px;height:31px;background:#fff"></div><div class="a" style="left:1720px;top:719px;width:1px;height:31px;background:#f0f0f0"></div><div class="t" style="left:1494px;top:728.5px;font-size:15px;color:#1a1a1a">Incognito/private window</div>
<div class="a" style="left:1721px;top:720px;width:106px;height:29px;border:1px solid #ccd6df;background:#fff;"></div><div class="a" style="left:1722px;top:721px;width:72px;height:27px;overflow:hidden"><div class="t" style="left:6px;top:5px;font-size:15px;color:#8a8a8a;font-style:italic;">Opens the</div></div><div class="a" style="left:1799px;top:720px;width:1px;height:29px;background:#ccd6df"></div>
<svg style="left:1803px;top:725px" width="18" height="18" viewBox="0 0 18 18"><circle cx="9" cy="9" r="8" fill="none" stroke="#555" stroke-width="1.2"/><path d="M9 4.04V13.96M4.04 9H13.96" stroke="#0b67d8" stroke-width="1.5"/></svg>
<div class="a" style="left:1830px;top:727px;width:17px;height:17px;border:1px solid #555;background:#fff"></div><div class="a" style="left:1834px;top:731px;width:9px;height:9px;background:#222"></div>
<div class="a" style="left:1852px;top:722px;width:25px;height:25px;border:1px solid #adadad;background:linear-gradient(#f2f2f2,#e6e6e6)"></div><div class="t" style="left:1858px;top:730px;font-size:13px;color:#111;letter-spacing:0.5px">...</div>
<div class="a" style="left:1487px;top:750px;width:391px;height:33px;background:#fff"></div><div class="a" style="left:1720px;top:750px;width:1px;height:33px;background:#f0f0f0"></div><div class="t" style="left:1494px;top:760.5px;font-size:15px;color:#1a1a1a">User data folder mode</div>
<div class="a" style="left:1721px;top:751px;width:106px;height:31px;border:1px solid #ccd6df;background:#fff;border-right:3px solid #ccd6df;"></div><div class="a" style="left:1722px;top:752px;width:96px;height:29px;overflow:hidden"><div class="t" style="left:6px;top:6px;font-size:15px;color:#8a8a8a;font-style:italic;">The user data</div></div>
<div class="a" style="left:1829px;top:756px;width:20px;height:22px;border:1px solid #adadad;background:linear-gradient(#f2f2f2,#e6e6e6)"></div><svg style="left:1835px;top:765px" width="8" height="5" viewBox="0 0 8 5"><path d="M0 0H8L4 5Z" fill="#111"/></svg>
<div class="a" style="left:1852px;top:754px;width:25px;height:25px;border:1px solid #adadad;background:linear-gradient(#f2f2f2,#e6e6e6)"></div><div class="t" style="left:1858px;top:762px;font-size:13px;color:#111;letter-spacing:0.5px">...</div>
<div class="a" style="left:1487px;top:783px;width:391px;height:32px;background:#fff"></div><div class="a" style="left:1720px;top:783px;width:1px;height:32px;background:#f0f0f0"></div><div class="t" style="left:1494px;top:793.0px;font-size:15px;color:#1a1a1a">User data folder path</div>
<div class="a" style="left:1721px;top:784px;width:131px;height:31px;border:1px solid #ccd6df;background:#fff;"></div><div class="a" style="left:1722px;top:785px;width:98px;height:29px;overflow:hidden"><div class="t" style="left:6px;top:6px;font-size:15px;color:#8a8a8a;font-style:italic;">The user data</div></div><div class="a" style="left:1825px;top:784px;width:1px;height:31px;background:#ccd6df"></div>
<svg style="left:1829px;top:790px" width="18" height="18" viewBox="0 0 18 18"><circle cx="9" cy="9" r="8" fill="none" stroke="#555" stroke-width="1.2"/><path d="M9 4.04V13.96M4.04 9H13.96" stroke="#0b67d8" stroke-width="1.5"/></svg>
<div class="a" style="left:1852px;top:787px;width:25px;height:25px;border:1px solid #adadad;background:linear-gradient(#f2f2f2,#e6e6e6)"></div><div class="t" style="left:1858px;top:795px;font-size:13px;color:#111;letter-spacing:0.5px">...</div>
<div class="a" style="left:1487px;top:815px;width:391px;height:31px;background:#fff"></div><div class="a" style="left:1720px;top:815px;width:1px;height:31px;background:#f0f0f0"></div><div class="t" style="left:1494px;top:824.5px;font-size:15px;color:#1a1a1a">WebDriver mode</div>
<div class="a" style="left:1721px;top:816px;width:106px;height:29px;border:1px solid #ccd6df;background:#fff;border-right:3px solid #ccd6df;"></div><div class="a" style="left:1722px;top:817px;width:96px;height:27px;overflow:hidden"><div class="t" style="left:6px;top:5px;font-size:15px;color:#8a8a8a;font-style:italic;">Indicates how</div></div>
<div class="a" style="left:1829px;top:820px;width:20px;height:21px;border:1px solid #adadad;background:linear-gradient(#f2f2f2,#e6e6e6)"></div><svg style="left:1835px;top:828px" width="8" height="5" viewBox="0 0 8 5"><path d="M0 0H8L4 5Z" fill="#111"/></svg>
<div class="a" style="left:1852px;top:818px;width:25px;height:25px;border:1px solid #adadad;background:linear-gradient(#f2f2f2,#e6e6e6)"></div><div class="t" style="left:1858px;top:826px;font-size:13px;color:#111;letter-spacing:0.5px">...</div>
<div class="a" style="left:1470px;top:846px;width:408px;height:102px;background:#fff"></div>
<svg style="left:0;top:0" width="1920" height="1080" viewBox="0 0 1920 1080"><path d="M1771 419C1750 420 1735 420 1720 423C1700 427 1680 429 1668 438C1657 447 1662 456 1680 462C1700 469 1725 475 1760 474C1800 473 1830 470 1845 460C1857 452 1851 446 1839 437C1821 424 1805 412 1781 409C1766 407 1760 410 1762 415" fill="none" stroke="#e31b1b" stroke-width="9" stroke-linecap="round" stroke-linejoin="round"/></svg>
<div class="a" style="left:1913px;top:140px;width:7px;height:120px;background:#e7e9eb"></div>
<div class="a" style="left:1913px;top:275px;width:7px;height:143px;background:#e7e9eb"></div>
<div class="a" style="left:1913px;top:435px;width:7px;height:70px;background:#e7e9eb"></div>
<div class="a" style="left:1913px;top:522px;width:7px;height:108px;background:#e7e9eb"></div>
<svg style="left:1890px;top:141px" width="20" height="18" viewBox="0 0 20 18"><path d="M1 1H13C17 1 19 4 19 8.5S17 16.5 13 16.5H1Z" fill="none" stroke="#4a555e" stroke-width="1.3"/><path d="M1 1H12V16.5H1Z" fill="#fff" stroke="#4a555e" stroke-width="1.3"/><path d="M4 3L6.5 6V11.5L4 14.5M9 3L6.5 6M9 14.5L6.5 11.5" fill="none" stroke="#0b67d8" stroke-width="1.6"/></svg>
<div class="t" style="left:1909px;top:165px;font-size:15px;color:#3a3f44;transform-origin:0 0;transform:rotate(90deg)">Data Manager</div>
<svg style="left:1891px;top:275px" width="18" height="20" viewBox="0 0 18 20"><path d="M5 1H17V17H5Z" fill="#4a555e"/><path d="M7 4H11M7 7H11M7 10H11" stroke="#fff" stroke-width="1"/><path d="M6 9L11 11.5V17L6 19.5L1 17V11.5Z" fill="#f07b3f"/><path d="M6 14L11 11.5V17L6 19.5Z" fill="#2f86e8"/><path d="M1 11.5L6 14V19.5L1 17Z" fill="#f5c542"/></svg>
<div class="t" style="left:1909px;top:299px;font-size:15px;color:#3a3f44;transform-origin:0 0;transform:rotate(90deg)">Object Repository</div>
<svg style="left:1890px;top:435px" width="20" height="20" viewBox="0 0 20 20"><g fill="#4a555e"><rect x="1" y="1" width="3" height="3"/><rect x="16" y="1" width="3" height="3"/><rect x="8.5" y="5" width="3" height="3"/><rect x="1" y="7" width="2" height="2"/><rect x="1" y="11" width="2" height="2"/><rect x="1" y="15" width="2" height="2"/></g><path d="M2.5 4V19M17.5 4V12M10 8V12M6 12H19M6 16H19" stroke="#4a555e" stroke-width="1"/></svg>
<div class="t" style="left:1909px;top:460px;font-size:14.5px;color:#3a3f44;transform-origin:0 0;transform:rotate(90deg)">Outline</div>
<svg style="left:1890px;top:522px" width="20" height="20" viewBox="0 0 20 20"><path d="M8 1H18M10 1V8L13 12" fill="none" stroke="#4a555e" stroke-width="1.3"/><path d="M16 1V8L19 13" fill="none" stroke="#4a555e" stroke-width="1.3"/><circle cx="7" cy="12" r="5" fill="none" stroke="#0b67d8" stroke-width="1.8"/><path d="M10.5 15.5L14 19" stroke="#0b67d8" stroke-width="2"/></svg>
<div class="t" style="left:1909px;top:546px;font-size:14.5px;color:#3a3f44;transform-origin:0 0;transform:rotate(90deg)">Test Explorer</div>
<!-- /PROPS -->
<!-- STATUS BAR -->
<div class="a" style="left:0;top:990px;width:1920px;height:30px;background:#0067dc"></div>
<div class="a" style="left:1368px;top:998px;width:12px;height:14px;background:#fff;border-radius:2px"></div>
<div class="a" style="left:1371px;top:1002px;width:6px;height:6px;border:1.5px solid #0067dc;border-radius:50%"></div>
<svg style="left:1386px;top:1003px" width="9" height="6" viewBox="0 0 9 6"><path d="M1 1L4.5 4.5L8 1" fill="none" stroke="#b9d3f5" stroke-width="1.2"/></svg>
<div class="a" style="left:1421px;top:1001px;width:9px;height:9px;border-radius:50%;background:#3fc23f"></div>
<div class="t" style="left:1438px;top:998px;font-size:15px;color:#fff">Shared</div>
<svg style="left:1490px;top:1003px" width="9" height="6" viewBox="0 0 9 6"><path d="M1 1L4.5 4.5L8 1" fill="none" stroke="#b9d3f5" stroke-width="1.2"/></svg>
<svg style="left:1544px;top:998px" width="15" height="15" viewBox="0 0 15 15"><path d="M7.5 0.5V14.5M0.5 7.5H14.5" stroke="#fff" stroke-width="3"/></svg>
<div class="t" style="left:1564px;top:998px;font-size:15px;color:#fff">Add To Source Control</div>
<svg style="left:1720px;top:1003px" width="9" height="6" viewBox="0 0 9 6"><path d="M1 1L4.5 4.5L8 1" fill="none" stroke="#b9d3f5" stroke-width="1.2"/></svg>
<div class="t" style="left:1750px;top:998px;font-size:14px;font-weight:bold;color:#fff">VB, Windows - Legacy</div>
<!-- TASKBAR -->
<div class="a" style="left:0;top:1020px;width:1920px;height:60px;background:linear-gradient(90deg,#dde8f3 0%,#e3eaf6 30%,#dfe4f5 60%,#e2e8f3 100%);border-top:1px solid #c9d0da"></div>
<div class="a" style="left:28px;top:1037px;width:25px;height:25px;border-radius:50%;background:radial-gradient(circle at 40% 35%,#ffb52e,#f2780c)"></div>
<div class="t" style="left:64px;top:1032px;font-size:15px;color:#1a1a1a">26°C</div>
<div class="t" style="left:64px;top:1051px;font-size:15px;color:#4a4a4a">Soleado</div>
<svg style="left:475px;top:1036px" width="29" height="29" viewBox="0 0 29 29"><defs><linearGradient id="wg" x1="0" y1="0" x2="1" y2="1"><stop offset="0" stop-color="#4fd0fb"/><stop offset="1" stop-color="#0a6ad6"/></linearGradient></defs><g fill="url(#wg)"><rect x="0" y="0" width="13.5" height="13.5" rx="1"/><rect x="15.5" y="0" width="13.5" height="13.5" rx="1"/><rect x="0" y="15.5" width="13.5" height="13.5" rx="1"/><rect x="15.5" y="15.5" width="13.5" height="13.5" rx="1"/></g></svg>
<div class="a" style="left:522px;top:1031px;width:273px;height:38px;border-radius:19px;background:#f4f6fb;border:1px solid #d5dbe5"></div>
<svg style="left:536px;top:1041px" width="19" height="19" viewBox="0 0 19 19"><circle cx="7.5" cy="7.5" r="6.2" fill="none" stroke="#222" stroke-width="1.8"/><path d="M12 12L17.5 17.5" stroke="#222" stroke-width="2.2"/></svg>
<div class="t" style="left:568px;top:1042px;font-size:17px;color:#5a5a5a">Búsqueda</div>
<div class="a" style="left:727px;top:1035px;width:64px;height:31px;border-radius:16px;background:#e4e7ee"></div>
<svg style="left:745px;top:1039px" width="29" height="24" viewBox="0 0 29 24"><path d="M10 5V2H19V5" fill="none" stroke="#333" stroke-width="2"/><rect x="0.5" y="5" width="28" height="18" rx="2" fill="#e88a1a"/><rect x="0.5" y="5" width="28" height="8" rx="2" fill="#f5a93a"/><rect x="12" y="11" width="5" height="4" fill="#ffe066"/></svg>
<div class="a" style="left:824px;top:1036px;width:17px;height:17px;background:#e8e8e8;border:1px solid #fff;border-radius:2px"></div>
<div class="a" style="left:811px;top:1044px;width:18px;height:19px;background:#222;border-radius:2px"></div>
<div class="a" style="left:816px;top:1044px;width:13px;height:12px;background:#aaa;border-radius:1px"></div>
<svg style="left:866px;top:1036px" width="29" height="28" viewBox="0 0 29 28"><defs><linearGradient id="tg" x1="0" y1="0" x2="1" y2="1"><stop offset="0" stop-color="#8e6df0"/><stop offset="1" stop-color="#5a3fc4"/></linearGradient></defs><path d="M14.5 1C22 1 28 6.5 28 13.5S22 26 14.5 26C12 26 9.5 25.5 7.5 24.5L1 27L3 21C1.5 19 1 16.5 1 13.5C1 6.5 7 1 14.5 1Z" fill="url(#tg)"/><rect x="7.5" y="9" width="10" height="9" rx="2" fill="#fff"/><path d="M18 11.5L22 9V18L18 15.5Z" fill="#fff"/></svg>
<svg style="left:920px;top:1035px" width="32" height="30" viewBox="0 0 32 30"><defs><linearGradient id="eg" x1="0" y1="0" x2="1" y2="1"><stop offset="0" stop-color="#35c1f1"/><stop offset="0.5" stop-color="#1a8ad6"/><stop offset="1" stop-color="#3bd37a"/></linearGradient></defs><path d="M16 1C24 1 31 7 31 14C31 18 28 20 24 20C20 20 19 18 19 16C19 13 22 13 22 11C22 8 19 6 15 6C9 6 4 11 4 17C4 23 9 28 15 28C9 29 1 24 1 15C1 7 8 1 16 1Z" fill="url(#eg)"/><rect x="1" y="17" width="14" height="12" rx="1" fill="#e3841a"/><rect x="1" y="17" width="14" height="5" fill="#f3a53a"/><path d="M5 17V15H11V17" fill="none" stroke="#444" stroke-width="1.2"/></svg>
<div class="a" style="left:932px;top:1070px;width:8px;height:3px;border-radius:2px;background:#707a85"></div>
<svg style="left:975px;top:1037px" width="32" height="27" viewBox="0 0 32 27"><path d="M0 3C0 1.5 1 0.5 2.5 0.5H11L14 3.5H29.5C31 3.5 31.5 4.5 31.5 6V25C31.5 26 31 26.5 30 26.5H1.5C0.5 26.5 0 26 0 25Z" fill="#f5c03a"/><path d="M0 7H31.5V25C31.5 26 31 26.5 30 26.5H1.5C0.5 26.5 0 26 0 25Z" fill="#ffd75e"/><rect x="8" y="19" width="16" height="7.5" rx="1.5" fill="#1e88e5"/><rect x="11" y="21.5" width="10" height="1.5" fill="#bfe0ff"/></svg>
<div class="a" style="left:987px;top:1070px;width:8px;height:3px;border-radius:2px;background:#707a85"></div>
<svg style="left:1031px;top:1036px" width="30" height="30" viewBox="0 0 30 30"><path d="M10 7V3H20V7" fill="none" stroke="#35a6e8" stroke-width="2"/><rect x="0.5" y="7" width="29" height="22" rx="3" fill="#1c4f8f"/><rect x="9" y="12" width="5.5" height="5.5" fill="#f25022"/><rect x="15.5" y="12" width="5.5" height="5.5" fill="#7fba00"/><rect x="9" y="18.5" width="5.5" height="5.5" fill="#00a4ef"/><rect x="15.5" y="18.5" width="5.5" height="5.5" fill="#ffb900"/></svg>
<svg style="left:1085px;top:1036px" width="32" height="28" viewBox="0 0 32 28"><path d="M1 11L21 3L31 11V27H1Z" fill="#1e7fd9"/><path d="M4 12L21 6L28 12L16 19Z" fill="#f3f3f3"/><path d="M1 12L16 21L31 12V27H1Z" fill="#35a3f0"/><path d="M1 27L16 17L31 27Z" fill="#1a8ae6"/></svg>
<div class="a" style="left:1102px;top:1029px;width:20px;height:20px;border-radius:50%;background:#1f6fd3;border:1px solid #e0e8f5"></div>
<div class="t" style="left:1107px;top:1032px;font-size:13px;color:#fff">5</div>
<div class="a" style="left:1175px;top:1025px;width:6px;height:49px;background:#fbe3e6;border-radius:0 5px 5px 0"></div>
<div class="a" style="left:1131px;top:1025px;width:43px;height:49px;background:#fce2e6;border-radius:5px"></div>
<svg style="left:1141px;top:1035px" width="30" height="30" viewBox="0 0 30 30"><circle cx="15" cy="15" r="14" fill="#2a9d4b"/><path d="M15 15L3 8A14 14 0 0 1 27 8Z" fill="#e33b2e"/><path d="M15 15L27 8A14 14 0 0 1 15 29Z" fill="#f8c22b"/><path d="M15 15L15 29A14 14 0 0 1 3 8Z" fill="#2a9d4b"/><circle cx="15" cy="15" r="6.5" fill="#fff"/><circle cx="15" cy="15" r="5" fill="#1a73e8"/></svg>
<div class="a" style="left:1151px;top:1069px;width:10px;height:4px;border-radius:2px;background:#c4202d"></div>
<svg style="left:1196px;top:1036px" width="37" height="28" viewBox="0 0 37 28"><rect x="10" y="6" width="22" height="21" rx="1" fill="#1f8ce0"/><rect x="10" y="6" width="11" height="10" fill="#0f5fb5"/><rect x="21" y="6" width="11" height="10" fill="#2ea2ef"/><path d="M10 16L21 22L32 16V27H10Z" fill="#33a8f5"/><rect x="0" y="10" width="16" height="16" rx="1.5" fill="#0a58b8"/><circle cx="8" cy="18" r="4.3" fill="none" stroke="#fff" stroke-width="2"/></svg>
<div class="a" style="left:1213px;top:1029px;width:20px;height:20px;border-radius:50%;background:#14539e;border:1px solid #e0e8f5"></div>
<svg style="left:1217px;top:1034px" width="12" height="9" viewBox="0 0 12 9"><path d="M0.5 0.5H11.5V8.5H0.5Z M0.5 0.5L6 5L11.5 0.5" fill="none" stroke="#fff" stroke-width="1"/></svg>
<div class="a" style="left:1207px;top:1070px;width:8px;height:3px;border-radius:2px;background:#707a85"></div>
<svg style="left:1250px;top:1036px" width="31" height="28" viewBox="0 0 31 28"><rect x="7" y="1" width="23" height="26" rx="1.5" fill="#185abd"/><rect x="7" y="1" width="23" height="7" fill="#41a5ee"/><rect x="7" y="8" width="23" height="6.5" fill="#2b7cd3"/><rect x="0" y="7" width="15" height="14" rx="1.5" fill="#103f91"/><path d="M2.5 10L4.5 18L7.5 11.5L10.5 18L12.5 10" fill="none" stroke="#fff" stroke-width="1.5"/></svg>
<div class="a" style="left:1261px;top:1070px;width:8px;height:3px;border-radius:2px;background:#707a85"></div>
<svg style="left:1306px;top:1036px" width="30" height="29" viewBox="0 0 30 29"><defs><radialGradient id="fg" cx="0.6" cy="0.2" r="0.9"><stop offset="0" stop-color="#ffe14a"/><stop offset="0.45" stop-color="#ff7a2a"/><stop offset="1" stop-color="#e6224a"/></radialGradient></defs><circle cx="15" cy="15.5" r="13.5" fill="url(#fg)"/><circle cx="14" cy="16" r="7" fill="#7b3ee6"/><circle cx="15" cy="15" r="4.5" fill="#9459ff"/><path d="M4 8C6 3 12 0.5 17 1C12 3 10 6 10 9Z" fill="#ffbd3a"/></svg>
<div class="a" style="left:1317px;top:1070px;width:8px;height:3px;border-radius:2px;background:#707a85"></div>
<svg style="left:1361px;top:1036px" width="30" height="28" viewBox="0 0 30 28"><rect x="7" y="1" width="22" height="26" rx="1.5" fill="#107c41"/><rect x="18" y="1" width="11" height="7" fill="#33c481"/><rect x="18" y="8" width="11" height="7" fill="#21a366"/><rect x="7" y="15" width="22" height="12" fill="#185c37"/><rect x="0" y="7" width="15" height="14" rx="1.5" fill="#0e6e37"/><path d="M3.5 10L11.5 18M11.5 10L3.5 18" stroke="#fff" stroke-width="1.8"/></svg>
<div class="a" style="left:1372px;top:1070px;width:8px;height:3px;border-radius:2px;background:#707a85"></div>
<svg style="left:1416px;top:1035px" width="30" height="30" viewBox="0 0 30 30"><defs><linearGradient id="ug" x1="0" y1="0" x2="1" y2="1"><stop offset="0" stop-color="#1a86f0"/><stop offset="1" stop-color="#0a57c9"/></linearGradient></defs><rect width="30" height="30" fill="url(#ug)"/><path d="M19 6C14 5 10 7 10 10.5C10 14 19 13.5 19 18C19 21.5 15 23 11 22.5" fill="none" stroke="#fff" stroke-width="2.4"/><circle cx="15" cy="4" r="1.5" fill="#fff"/><circle cx="15" cy="26" r="1.5" fill="#fff"/></svg>
<div class="a" style="left:1427px;top:1070px;width:8px;height:3px;border-radius:2px;background:#707a85"></div>
<svg style="left:1650px;top:1045px" width="15" height="9" viewBox="0 0 15 9"><path d="M1 8L7.5 1.5L14 8" fill="none" stroke="#222" stroke-width="1.6"/></svg>
<svg style="left:1687px;top:1041px" width="21" height="16" viewBox="0 0 21 16"><path d="M1 5.5C6.5 0.5 14.5 0.5 20 5.5M4 9C8 5.5 13 5.5 17 9M7 12C9 10.5 12 10.5 14 12" fill="none" stroke="#222" stroke-width="1.5"/><circle cx="10.5" cy="14.5" r="1.3" fill="#222"/></svg>
<svg style="left:1717px;top:1041px" width="21" height="17" viewBox="0 0 21 17"><path d="M1 5.5H5L10 1.5V15.5L5 11.5H1Z" fill="none" stroke="#222" stroke-width="1.3"/><path d="M13 5C14.5 6.5 14.5 10.5 13 12M16 3C18.5 5.5 18.5 11.5 16 14" fill="none" stroke="#222" stroke-width="1.3"/><path d="M19 1.5C22 5 22 12 19 15.5" fill="none" stroke="#888" stroke-width="1.2"/></svg>
<svg style="left:1747px;top:1040px" width="22" height="17" viewBox="0 0 22 17"><rect x="1" y="5" width="17" height="10" rx="2" fill="none" stroke="#222" stroke-width="1.5"/><rect x="18.5" y="8" width="2.5" height="4" fill="#222"/><rect x="3" y="7" width="13" height="6" fill="#222"/><path d="M6 0L3 6H7L5 10" fill="none" stroke="#222" stroke-width="1.2"/></svg>
<div class="t" style="right:54px;top:1032px;font-size:15px;color:#1a1a1a">19:09</div>
<div class="t" style="right:54px;top:1052px;font-size:15px;color:#1a1a1a">29/09/2023</div>
<div class="a" style="left:1873px;top:1038px;width:23px;height:23px;border-radius:50%;background:#1268c4"></div>
<div class="t" style="left:1877px;top:1043px;font-size:13px;color:#fff">21</div>
<!-- /TASKBAR -->
</body></html>
